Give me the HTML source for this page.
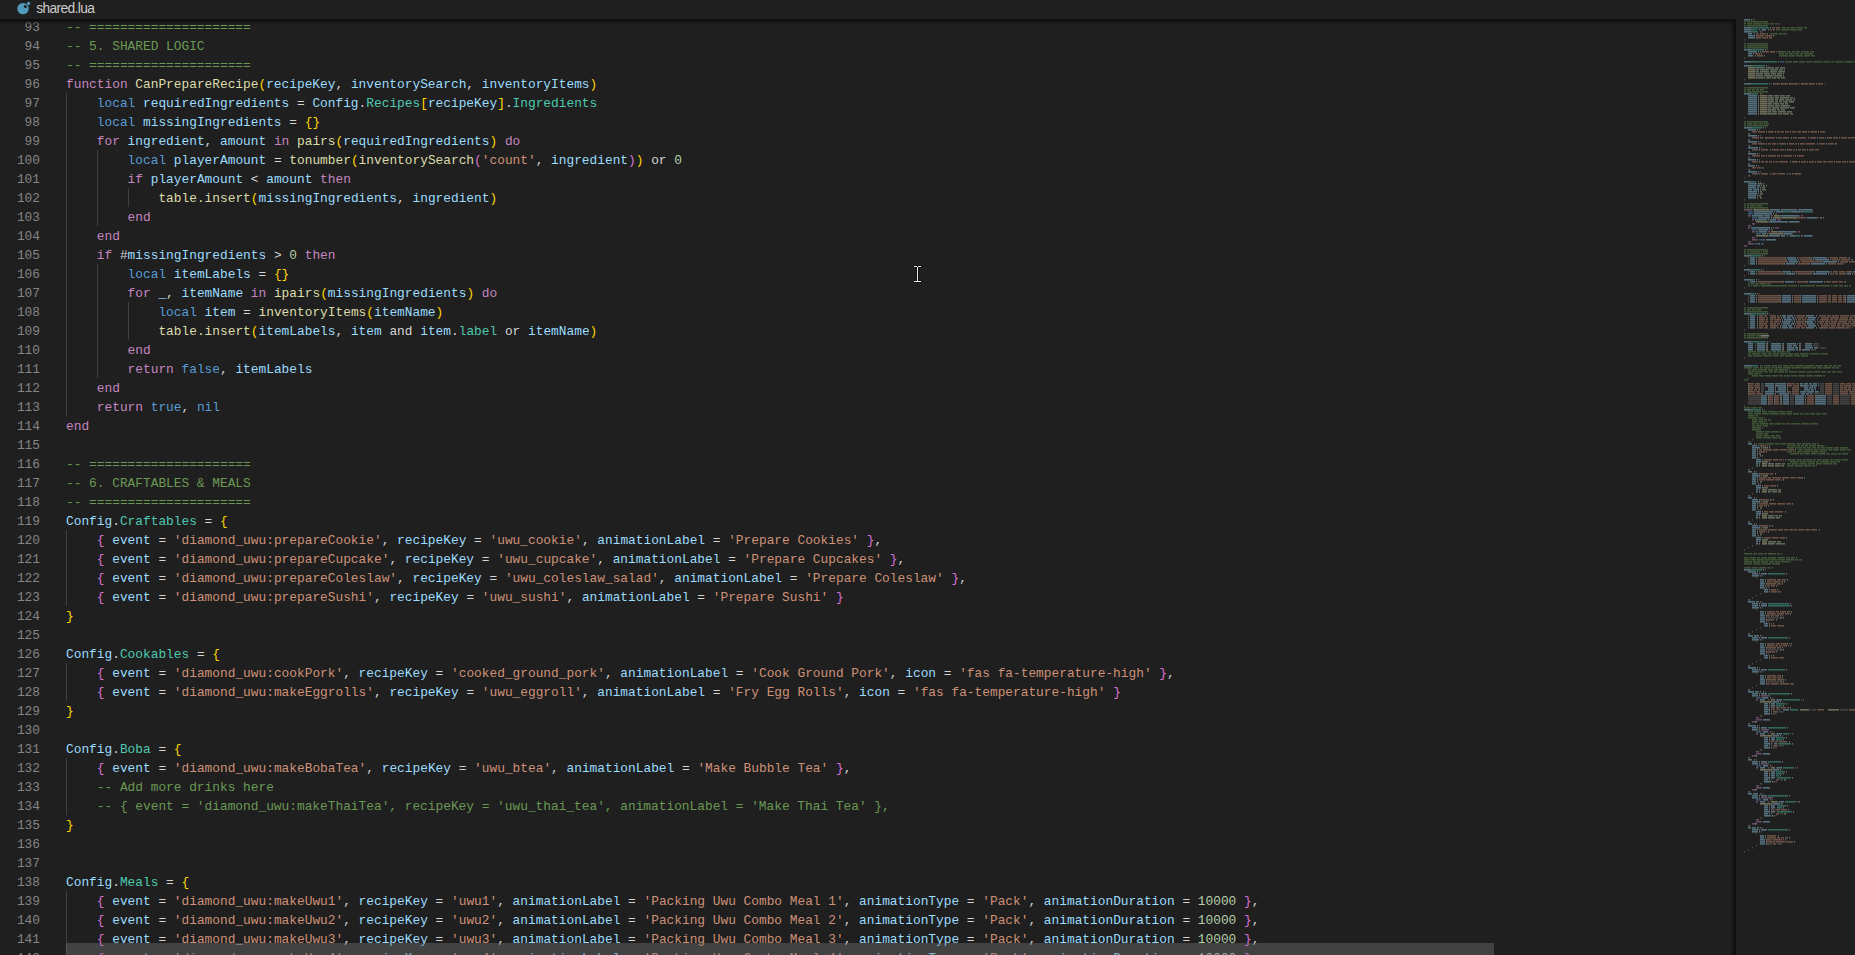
<!DOCTYPE html>
<html><head><meta charset="utf-8">
<style>
html,body{margin:0;padding:0;background:#1f1f1f;width:1855px;height:955px;overflow:hidden;position:relative}
.ed{position:absolute;left:0;top:0;width:1855px;height:955px;overflow:hidden}
.l,.n{position:absolute;white-space:pre;font-family:"Liberation Mono",monospace;font-size:12.83px;line-height:19px;height:19px}
.l{left:66px}
.n{left:0;width:40px;text-align:right;color:#858585}
.g{position:absolute;width:1px;background:#404040}
i,b{font-style:normal;font-weight:normal}
.kw{color:#c586c0}.st{color:#569cd6}.op{color:#d4d4d4}.fn{color:#dcdcaa}.var{color:#9cdcfe}.fld{color:#4ec9b0}.str{color:#ce9178}.num{color:#b5cea8}.com{color:#6a9955}
.tab{position:absolute;left:0;top:0;width:1855px;height:19px;background:#1f1f1f;z-index:5}
.tabtxt{position:absolute;left:36.3px;top:0;font-family:"Liberation Sans",sans-serif;font-size:13.8px;line-height:17px;color:#cccccc;letter-spacing:-0.65px}
.shadow{position:absolute;left:0;top:19px;width:1736px;height:6px;background:linear-gradient(#0c0c0c,rgba(0,0,0,0));z-index:5}
.mm{position:absolute;left:1736px;top:0;width:119px;height:955px;background:#1f1f1f;z-index:4}
.mmshadow{position:absolute;left:1730px;top:0;width:6px;height:955px;background:linear-gradient(to left,rgba(0,0,0,0.6),rgba(0,0,0,0));z-index:4}
.mmstripe{position:absolute;left:0;top:19px;width:119px;height:936px;background:repeating-linear-gradient(to bottom,rgba(31,31,31,0) 0px,rgba(31,31,31,0) 1px,rgba(31,31,31,0.4) 1px,rgba(31,31,31,0.4) 2px)}
.hs{position:absolute;left:66px;top:943px;width:1428px;height:12px;background:rgba(121,121,121,0.4);z-index:3}
.cur{position:absolute;left:912px;top:264px;z-index:6}
</style></head><body>
<div class="ed">
<div class="g" style="left:66px;top:93px;height:323px"></div>
<div class="g" style="left:66px;top:530px;height:76px"></div>
<div class="g" style="left:66px;top:663px;height:38px"></div>
<div class="g" style="left:66px;top:758px;height:57px"></div>
<div class="g" style="left:66px;top:891px;height:76px"></div>
<div class="g" style="left:97px;top:150px;height:76px"></div>
<div class="g" style="left:97px;top:264px;height:114px"></div>
<div class="g" style="left:128px;top:188px;height:19px"></div>
<div class="g" style="left:128px;top:302px;height:38px"></div>
<div class="n" style="top:18px">93</div>
<div class="n" style="top:37px">94</div>
<div class="n" style="top:56px">95</div>
<div class="n" style="top:75px">96</div>
<div class="n" style="top:94px">97</div>
<div class="n" style="top:113px">98</div>
<div class="n" style="top:132px">99</div>
<div class="n" style="top:151px">100</div>
<div class="n" style="top:170px">101</div>
<div class="n" style="top:189px">102</div>
<div class="n" style="top:208px">103</div>
<div class="n" style="top:227px">104</div>
<div class="n" style="top:246px">105</div>
<div class="n" style="top:265px">106</div>
<div class="n" style="top:284px">107</div>
<div class="n" style="top:303px">108</div>
<div class="n" style="top:322px">109</div>
<div class="n" style="top:341px">110</div>
<div class="n" style="top:360px">111</div>
<div class="n" style="top:379px">112</div>
<div class="n" style="top:398px">113</div>
<div class="n" style="top:417px">114</div>
<div class="n" style="top:436px">115</div>
<div class="n" style="top:455px">116</div>
<div class="n" style="top:474px">117</div>
<div class="n" style="top:493px">118</div>
<div class="n" style="top:512px">119</div>
<div class="n" style="top:531px">120</div>
<div class="n" style="top:550px">121</div>
<div class="n" style="top:569px">122</div>
<div class="n" style="top:588px">123</div>
<div class="n" style="top:607px">124</div>
<div class="n" style="top:626px">125</div>
<div class="n" style="top:645px">126</div>
<div class="n" style="top:664px">127</div>
<div class="n" style="top:683px">128</div>
<div class="n" style="top:702px">129</div>
<div class="n" style="top:721px">130</div>
<div class="n" style="top:740px">131</div>
<div class="n" style="top:759px">132</div>
<div class="n" style="top:778px">133</div>
<div class="n" style="top:797px">134</div>
<div class="n" style="top:816px">135</div>
<div class="n" style="top:835px">136</div>
<div class="n" style="top:854px">137</div>
<div class="n" style="top:873px">138</div>
<div class="n" style="top:892px">139</div>
<div class="n" style="top:911px">140</div>
<div class="n" style="top:930px">141</div>
<div class="n" style="top:949px">142</div>
<div class="l" style="top:18px"><i class="com">-- =====================</i></div>
<div class="l" style="top:37px"><i class="com">-- 5. SHARED LOGIC</i></div>
<div class="l" style="top:56px"><i class="com">-- =====================</i></div>
<div class="l" style="top:75px"><i class="kw">function</i> <i class="fn">CanPrepareRecipe</i><b style="color:#ffd700">(</b><i class="var">recipeKey</i><i class="op">,</i> <i class="var">inventorySearch</i><i class="op">,</i> <i class="var">inventoryItems</i><b style="color:#ffd700">)</b></div>
<div class="l" style="top:94px">    <i class="st">local</i> <i class="var">requiredIngredients</i> <i class="op">=</i> <i class="var">Config</i><i class="op">.</i><i class="fld">Recipes</i><b style="color:#ffd700">[</b><i class="var">recipeKey</i><b style="color:#ffd700">]</b><i class="op">.</i><i class="fld">Ingredients</i></div>
<div class="l" style="top:113px">    <i class="st">local</i> <i class="var">missingIngredients</i> <i class="op">=</i> <b style="color:#ffd700">{</b><b style="color:#ffd700">}</b></div>
<div class="l" style="top:132px">    <i class="kw">for</i> <i class="var">ingredient</i><i class="op">,</i> <i class="var">amount</i> <i class="kw">in</i> <i class="fn">pairs</i><b style="color:#ffd700">(</b><i class="var">requiredIngredients</i><b style="color:#ffd700">)</b> <i class="kw">do</i></div>
<div class="l" style="top:151px">        <i class="st">local</i> <i class="var">playerAmount</i> <i class="op">=</i> <i class="fn">tonumber</i><b style="color:#ffd700">(</b><i class="fn">inventorySearch</i><b style="color:#da70d6">(</b><i class="str">&#x27;count&#x27;</i><i class="op">,</i> <i class="var">ingredient</i><b style="color:#da70d6">)</b><b style="color:#ffd700">)</b> <i class="op">or</i> <i class="num">0</i></div>
<div class="l" style="top:170px">        <i class="kw">if</i> <i class="var">playerAmount</i> <i class="op">&lt;</i> <i class="var">amount</i> <i class="kw">then</i></div>
<div class="l" style="top:189px">            <i class="fn">table</i><i class="fn">.</i><i class="fn">insert</i><b style="color:#ffd700">(</b><i class="var">missingIngredients</i><i class="op">,</i> <i class="var">ingredient</i><b style="color:#ffd700">)</b></div>
<div class="l" style="top:208px">        <i class="kw">end</i></div>
<div class="l" style="top:227px">    <i class="kw">end</i></div>
<div class="l" style="top:246px">    <i class="kw">if</i> <i class="op">#</i><i class="var">missingIngredients</i> <i class="op">&gt;</i> <i class="num">0</i> <i class="kw">then</i></div>
<div class="l" style="top:265px">        <i class="st">local</i> <i class="var">itemLabels</i> <i class="op">=</i> <b style="color:#ffd700">{</b><b style="color:#ffd700">}</b></div>
<div class="l" style="top:284px">        <i class="kw">for</i> <i class="var">_</i><i class="op">,</i> <i class="var">itemName</i> <i class="kw">in</i> <i class="fn">ipairs</i><b style="color:#ffd700">(</b><i class="var">missingIngredients</i><b style="color:#ffd700">)</b> <i class="kw">do</i></div>
<div class="l" style="top:303px">            <i class="st">local</i> <i class="var">item</i> <i class="op">=</i> <i class="fn">inventoryItems</i><b style="color:#ffd700">(</b><i class="var">itemName</i><b style="color:#ffd700">)</b></div>
<div class="l" style="top:322px">            <i class="fn">table</i><i class="fn">.</i><i class="fn">insert</i><b style="color:#ffd700">(</b><i class="var">itemLabels</i><i class="op">,</i> <i class="var">item</i> <i class="op">and</i> <i class="var">item</i><i class="op">.</i><i class="fld">label</i> <i class="op">or</i> <i class="var">itemName</i><b style="color:#ffd700">)</b></div>
<div class="l" style="top:341px">        <i class="kw">end</i></div>
<div class="l" style="top:360px">        <i class="kw">return</i> <i class="st">false</i><i class="op">,</i> <i class="var">itemLabels</i></div>
<div class="l" style="top:379px">    <i class="kw">end</i></div>
<div class="l" style="top:398px">    <i class="kw">return</i> <i class="st">true</i><i class="op">,</i> <i class="st">nil</i></div>
<div class="l" style="top:417px"><i class="kw">end</i></div>
<div class="l" style="top:436px"></div>
<div class="l" style="top:455px"><i class="com">-- =====================</i></div>
<div class="l" style="top:474px"><i class="com">-- 6. CRAFTABLES &amp; MEALS</i></div>
<div class="l" style="top:493px"><i class="com">-- =====================</i></div>
<div class="l" style="top:512px"><i class="var">Config</i><i class="op">.</i><i class="fld">Craftables</i> <i class="op">=</i> <b style="color:#ffd700">{</b></div>
<div class="l" style="top:531px">    <b style="color:#da70d6">{</b> <i class="var">event</i> <i class="op">=</i> <i class="str">&#x27;diamond_uwu:prepareCookie&#x27;</i><i class="op">,</i> <i class="var">recipeKey</i> <i class="op">=</i> <i class="str">&#x27;uwu_cookie&#x27;</i><i class="op">,</i> <i class="var">animationLabel</i> <i class="op">=</i> <i class="str">&#x27;Prepare Cookies&#x27;</i> <b style="color:#da70d6">}</b><i class="op">,</i></div>
<div class="l" style="top:550px">    <b style="color:#da70d6">{</b> <i class="var">event</i> <i class="op">=</i> <i class="str">&#x27;diamond_uwu:prepareCupcake&#x27;</i><i class="op">,</i> <i class="var">recipeKey</i> <i class="op">=</i> <i class="str">&#x27;uwu_cupcake&#x27;</i><i class="op">,</i> <i class="var">animationLabel</i> <i class="op">=</i> <i class="str">&#x27;Prepare Cupcakes&#x27;</i> <b style="color:#da70d6">}</b><i class="op">,</i></div>
<div class="l" style="top:569px">    <b style="color:#da70d6">{</b> <i class="var">event</i> <i class="op">=</i> <i class="str">&#x27;diamond_uwu:prepareColeslaw&#x27;</i><i class="op">,</i> <i class="var">recipeKey</i> <i class="op">=</i> <i class="str">&#x27;uwu_coleslaw_salad&#x27;</i><i class="op">,</i> <i class="var">animationLabel</i> <i class="op">=</i> <i class="str">&#x27;Prepare Coleslaw&#x27;</i> <b style="color:#da70d6">}</b><i class="op">,</i></div>
<div class="l" style="top:588px">    <b style="color:#da70d6">{</b> <i class="var">event</i> <i class="op">=</i> <i class="str">&#x27;diamond_uwu:prepareSushi&#x27;</i><i class="op">,</i> <i class="var">recipeKey</i> <i class="op">=</i> <i class="str">&#x27;uwu_sushi&#x27;</i><i class="op">,</i> <i class="var">animationLabel</i> <i class="op">=</i> <i class="str">&#x27;Prepare Sushi&#x27;</i> <b style="color:#da70d6">}</b></div>
<div class="l" style="top:607px"><b style="color:#ffd700">}</b></div>
<div class="l" style="top:626px"></div>
<div class="l" style="top:645px"><i class="var">Config</i><i class="op">.</i><i class="fld">Cookables</i> <i class="op">=</i> <b style="color:#ffd700">{</b></div>
<div class="l" style="top:664px">    <b style="color:#da70d6">{</b> <i class="var">event</i> <i class="op">=</i> <i class="str">&#x27;diamond_uwu:cookPork&#x27;</i><i class="op">,</i> <i class="var">recipeKey</i> <i class="op">=</i> <i class="str">&#x27;cooked_ground_pork&#x27;</i><i class="op">,</i> <i class="var">animationLabel</i> <i class="op">=</i> <i class="str">&#x27;Cook Ground Pork&#x27;</i><i class="op">,</i> <i class="var">icon</i> <i class="op">=</i> <i class="str">&#x27;fas fa-temperature-high&#x27;</i> <b style="color:#da70d6">}</b><i class="op">,</i></div>
<div class="l" style="top:683px">    <b style="color:#da70d6">{</b> <i class="var">event</i> <i class="op">=</i> <i class="str">&#x27;diamond_uwu:makeEggrolls&#x27;</i><i class="op">,</i> <i class="var">recipeKey</i> <i class="op">=</i> <i class="str">&#x27;uwu_eggroll&#x27;</i><i class="op">,</i> <i class="var">animationLabel</i> <i class="op">=</i> <i class="str">&#x27;Fry Egg Rolls&#x27;</i><i class="op">,</i> <i class="var">icon</i> <i class="op">=</i> <i class="str">&#x27;fas fa-temperature-high&#x27;</i> <b style="color:#da70d6">}</b></div>
<div class="l" style="top:702px"><b style="color:#ffd700">}</b></div>
<div class="l" style="top:721px"></div>
<div class="l" style="top:740px"><i class="var">Config</i><i class="op">.</i><i class="fld">Boba</i> <i class="op">=</i> <b style="color:#ffd700">{</b></div>
<div class="l" style="top:759px">    <b style="color:#da70d6">{</b> <i class="var">event</i> <i class="op">=</i> <i class="str">&#x27;diamond_uwu:makeBobaTea&#x27;</i><i class="op">,</i> <i class="var">recipeKey</i> <i class="op">=</i> <i class="str">&#x27;uwu_btea&#x27;</i><i class="op">,</i> <i class="var">animationLabel</i> <i class="op">=</i> <i class="str">&#x27;Make Bubble Tea&#x27;</i> <b style="color:#da70d6">}</b><i class="op">,</i></div>
<div class="l" style="top:778px">    <i class="com">-- Add more drinks here</i></div>
<div class="l" style="top:797px">    <i class="com">-- { event = &#x27;diamond_uwu:makeThaiTea&#x27;, recipeKey = &#x27;uwu_thai_tea&#x27;, animationLabel = &#x27;Make Thai Tea&#x27; },</i></div>
<div class="l" style="top:816px"><b style="color:#ffd700">}</b></div>
<div class="l" style="top:835px"></div>
<div class="l" style="top:854px"></div>
<div class="l" style="top:873px"><i class="var">Config</i><i class="op">.</i><i class="fld">Meals</i> <i class="op">=</i> <b style="color:#ffd700">{</b></div>
<div class="l" style="top:892px">    <b style="color:#da70d6">{</b> <i class="var">event</i> <i class="op">=</i> <i class="str">&#x27;diamond_uwu:makeUwu1&#x27;</i><i class="op">,</i> <i class="var">recipeKey</i> <i class="op">=</i> <i class="str">&#x27;uwu1&#x27;</i><i class="op">,</i> <i class="var">animationLabel</i> <i class="op">=</i> <i class="str">&#x27;Packing Uwu Combo Meal 1&#x27;</i><i class="op">,</i> <i class="var">animationType</i> <i class="op">=</i> <i class="str">&#x27;Pack&#x27;</i><i class="op">,</i> <i class="var">animationDuration</i> <i class="op">=</i> <i class="num">10000</i> <b style="color:#da70d6">}</b><i class="op">,</i></div>
<div class="l" style="top:911px">    <b style="color:#da70d6">{</b> <i class="var">event</i> <i class="op">=</i> <i class="str">&#x27;diamond_uwu:makeUwu2&#x27;</i><i class="op">,</i> <i class="var">recipeKey</i> <i class="op">=</i> <i class="str">&#x27;uwu2&#x27;</i><i class="op">,</i> <i class="var">animationLabel</i> <i class="op">=</i> <i class="str">&#x27;Packing Uwu Combo Meal 2&#x27;</i><i class="op">,</i> <i class="var">animationType</i> <i class="op">=</i> <i class="str">&#x27;Pack&#x27;</i><i class="op">,</i> <i class="var">animationDuration</i> <i class="op">=</i> <i class="num">10000</i> <b style="color:#da70d6">}</b><i class="op">,</i></div>
<div class="l" style="top:930px">    <b style="color:#da70d6">{</b> <i class="var">event</i> <i class="op">=</i> <i class="str">&#x27;diamond_uwu:makeUwu3&#x27;</i><i class="op">,</i> <i class="var">recipeKey</i> <i class="op">=</i> <i class="str">&#x27;uwu3&#x27;</i><i class="op">,</i> <i class="var">animationLabel</i> <i class="op">=</i> <i class="str">&#x27;Packing Uwu Combo Meal 3&#x27;</i><i class="op">,</i> <i class="var">animationType</i> <i class="op">=</i> <i class="str">&#x27;Pack&#x27;</i><i class="op">,</i> <i class="var">animationDuration</i> <i class="op">=</i> <i class="num">10000</i> <b style="color:#da70d6">}</b><i class="op">,</i></div>
<div class="l" style="top:949px">    <b style="color:#da70d6">{</b> <i class="var">event</i> <i class="op">=</i> <i class="str">&#x27;diamond_uwu:makeUwu4&#x27;</i><i class="op">,</i> <i class="var">recipeKey</i> <i class="op">=</i> <i class="str">&#x27;uwu4&#x27;</i><i class="op">,</i> <i class="var">animationLabel</i> <i class="op">=</i> <i class="str">&#x27;Packing Uwu Combo Meal 4&#x27;</i><i class="op">,</i> <i class="var">animationType</i> <i class="op">=</i> <i class="str">&#x27;Pack&#x27;</i><i class="op">,</i> <i class="var">animationDuration</i> <i class="op">=</i> <i class="num">10000</i> <b style="color:#da70d6">}</b><i class="op">,</i></div>
</div>
<div class="hs"></div>
<div class="tab">
<svg style="position:absolute;left:15px;top:0" width="18" height="18" viewBox="0 0 18 18">
<circle cx="8" cy="8.6" r="5.7" fill="#519aba"/>
<circle cx="10.3" cy="6.5" r="1.5" fill="#1f1f1f"/>
<circle cx="13.6" cy="3.4" r="1.65" fill="#519aba"/>
</svg>
<div class="tabtxt">shared.lua</div>
</div>
<div class="shadow"></div>
<div class="mmshadow"></div>
<div class="mm"><svg width="119" height="955" style="position:absolute;left:0;top:0;filter:blur(0.35px)" shape-rendering="crispEdges"><g opacity="0.42"><rect x="8" y="19" width="6" height="2" fill="#9cdcfe"/><rect x="15" y="19" width="1" height="2" fill="#d4d4d4"/><rect x="17" y="19" width="2" height="2" fill="#c8c8b0" opacity="0.6"/><rect x="8" y="21" width="2" height="2" fill="#6a9955"/><rect x="11" y="21" width="21" height="2" fill="#6a9955"/><rect x="8" y="23" width="2" height="2" fill="#6a9955"/><rect x="11" y="23" width="5" height="2" fill="#6a9955"/><rect x="17" y="23" width="9" height="2" fill="#6a9955"/><rect x="27" y="23" width="6" height="2" fill="#6a9955"/><rect x="34" y="23" width="4" height="2" fill="#6a9955"/><rect x="39" y="23" width="3" height="2" fill="#6a9955"/><rect x="43" y="23" width="1" height="2" fill="#6a9955"/><rect x="8" y="25" width="2" height="2" fill="#6a9955"/><rect x="11" y="25" width="21" height="2" fill="#6a9955"/><rect x="8" y="27" width="6" height="2" fill="#9cdcfe"/><rect x="14" y="27" width="1" height="2" fill="#d4d4d4"/><rect x="15" y="27" width="18" height="2" fill="#4ec9b0"/><rect x="34" y="27" width="1" height="2" fill="#d4d4d4"/><rect x="36" y="27" width="3" height="2" fill="#ce9178"/><rect x="40" y="27" width="4" height="2" fill="#ce9178"/><rect x="46" y="27" width="4" height="2" fill="#6a9955"/><rect x="51" y="27" width="3" height="2" fill="#6a9955"/><rect x="55" y="27" width="4" height="2" fill="#6a9955"/><rect x="60" y="27" width="7" height="2" fill="#6a9955"/><rect x="68" y="27" width="3" height="2" fill="#6a9955"/><rect x="8" y="29" width="6" height="2" fill="#9cdcfe"/><rect x="14" y="29" width="1" height="2" fill="#d4d4d4"/><rect x="15" y="29" width="6" height="2" fill="#4ec9b0"/><rect x="23" y="29" width="1" height="2" fill="#d4d4d4"/><rect x="25" y="29" width="1" height="2" fill="#c8c8b0" opacity="0.6"/><rect x="26" y="29" width="4" height="2" fill="#9cdcfe"/><rect x="32" y="29" width="1" height="2" fill="#d4d4d4"/><rect x="34" y="29" width="2" height="2" fill="#ce9178"/><rect x="37" y="29" width="1" height="2" fill="#d4d4d4"/><rect x="38" y="29" width="1" height="2" fill="#c8c8b0" opacity="0.6"/><rect x="40" y="29" width="4" height="2" fill="#6a9955"/><rect x="45" y="29" width="8" height="2" fill="#6a9955"/><rect x="54" y="29" width="7" height="2" fill="#6a9955"/><rect x="62" y="29" width="4" height="2" fill="#6a9955"/><rect x="8" y="31" width="6" height="2" fill="#9cdcfe"/><rect x="14" y="31" width="1" height="2" fill="#d4d4d4"/><rect x="15" y="31" width="7" height="2" fill="#4ec9b0"/><rect x="24" y="31" width="1" height="2" fill="#d4d4d4"/><rect x="26" y="31" width="1" height="2" fill="#c8c8b0" opacity="0.6"/><rect x="12" y="33" width="4" height="2" fill="#9cdcfe"/><rect x="18" y="33" width="1" height="2" fill="#d4d4d4"/><rect x="20" y="33" width="3" height="2" fill="#ce9178"/><rect x="24" y="33" width="6" height="2" fill="#ce9178"/><rect x="31" y="33" width="1" height="2" fill="#d4d4d4"/><rect x="34" y="33" width="8" height="2" fill="#6a9955"/><rect x="43" y="33" width="3" height="2" fill="#6a9955"/><rect x="47" y="33" width="4" height="2" fill="#6a9955"/><rect x="12" y="35" width="7" height="2" fill="#9cdcfe"/><rect x="20" y="35" width="1" height="2" fill="#d4d4d4"/><rect x="21" y="35" width="7" height="2" fill="#ce9178"/><rect x="29" y="35" width="7" height="2" fill="#ce9178"/><rect x="37" y="35" width="1" height="2" fill="#d4d4d4"/><rect x="12" y="37" width="7" height="2" fill="#9cdcfe"/><rect x="20" y="37" width="1" height="2" fill="#d4d4d4"/><rect x="21" y="37" width="4" height="2" fill="#ce9178"/><rect x="26" y="37" width="6" height="2" fill="#ce9178"/><rect x="33" y="37" width="3" height="2" fill="#ce9178"/><rect x="8" y="39" width="1" height="2" fill="#c8c8b0" opacity="0.6"/><rect x="8" y="43" width="2" height="2" fill="#6a9955"/><rect x="11" y="43" width="21" height="2" fill="#6a9955"/><rect x="8" y="45" width="2" height="2" fill="#6a9955"/><rect x="11" y="45" width="21" height="2" fill="#6a9955"/><rect x="8" y="47" width="2" height="2" fill="#6a9955"/><rect x="11" y="47" width="21" height="2" fill="#6a9955"/><rect x="8" y="49" width="6" height="2" fill="#9cdcfe"/><rect x="14" y="49" width="1" height="2" fill="#d4d4d4"/><rect x="15" y="49" width="13" height="2" fill="#4ec9b0"/><rect x="29" y="49" width="1" height="2" fill="#d4d4d4"/><rect x="31" y="49" width="1" height="2" fill="#c8c8b0" opacity="0.6"/><rect x="12" y="51" width="9" height="2" fill="#9cdcfe"/><rect x="22" y="51" width="1" height="2" fill="#9cdcfe"/><rect x="24" y="51" width="1" height="2" fill="#d4d4d4"/><rect x="26" y="51" width="7" height="2" fill="#ce9178"/><rect x="34" y="51" width="5" height="2" fill="#ce9178"/><rect x="40" y="51" width="1" height="2" fill="#ce9178"/><rect x="42" y="51" width="1" height="2" fill="#d4d4d4"/><rect x="43" y="51" width="7" height="2" fill="#6a9955"/><rect x="51" y="51" width="4" height="2" fill="#6a9955"/><rect x="56" y="51" width="3" height="2" fill="#6a9955"/><rect x="60" y="51" width="4" height="2" fill="#6a9955"/><rect x="65" y="51" width="8" height="2" fill="#6a9955"/><rect x="74" y="51" width="4" height="2" fill="#6a9955"/><rect x="12" y="53" width="4" height="2" fill="#9cdcfe"/><rect x="17" y="53" width="1" height="2" fill="#d4d4d4"/><rect x="19" y="53" width="5" height="2" fill="#ce9178"/><rect x="25" y="53" width="1" height="2" fill="#d4d4d4"/><rect x="43" y="53" width="5" height="2" fill="#6a9955"/><rect x="49" y="53" width="3" height="2" fill="#6a9955"/><rect x="53" y="53" width="4" height="2" fill="#6a9955"/><rect x="58" y="53" width="5" height="2" fill="#6a9955"/><rect x="64" y="53" width="3" height="2" fill="#6a9955"/><rect x="68" y="53" width="9" height="2" fill="#6a9955"/><rect x="12" y="55" width="5" height="2" fill="#9cdcfe"/><rect x="19" y="55" width="1" height="2" fill="#d4d4d4"/><rect x="21" y="55" width="6" height="2" fill="#ce9178"/><rect x="28" y="55" width="1" height="2" fill="#d4d4d4"/><rect x="43" y="55" width="9" height="2" fill="#6a9955"/><rect x="53" y="55" width="6" height="2" fill="#6a9955"/><rect x="60" y="55" width="7" height="2" fill="#6a9955"/><rect x="68" y="55" width="6" height="2" fill="#6a9955"/><rect x="75" y="55" width="4" height="2" fill="#6a9955"/><rect x="8" y="57" width="1" height="2" fill="#c8c8b0" opacity="0.6"/><rect x="8" y="61" width="6" height="2" fill="#9cdcfe"/><rect x="14" y="61" width="1" height="2" fill="#d4d4d4"/><rect x="15" y="61" width="26" height="2" fill="#4ec9b0"/><rect x="42" y="61" width="1" height="2" fill="#d4d4d4"/><rect x="44" y="61" width="4" height="2" fill="#569cd6"/><rect x="49" y="61" width="7" height="2" fill="#6a9955"/><rect x="57" y="61" width="5" height="2" fill="#6a9955"/><rect x="63" y="61" width="6" height="2" fill="#6a9955"/><rect x="70" y="61" width="6" height="2" fill="#6a9955"/><rect x="77" y="61" width="9" height="2" fill="#6a9955"/><rect x="87" y="61" width="7" height="2" fill="#6a9955"/><rect x="95" y="61" width="3" height="2" fill="#6a9955"/><rect x="99" y="61" width="8" height="2" fill="#6a9955"/><rect x="108" y="61" width="9" height="2" fill="#6a9955"/><rect x="118" y="61" width="1" height="2" fill="#6a9955"/><rect x="8" y="65" width="6" height="2" fill="#9cdcfe"/><rect x="14" y="65" width="1" height="2" fill="#d4d4d4"/><rect x="15" y="65" width="14" height="2" fill="#4ec9b0"/><rect x="30" y="65" width="1" height="2" fill="#d4d4d4"/><rect x="32" y="65" width="1" height="2" fill="#c8c8b0" opacity="0.6"/><rect x="12" y="67" width="7" height="2" fill="#dcdcaa"/><rect x="19" y="67" width="1" height="2" fill="#c8c8b0" opacity="0.6"/><rect x="20" y="67" width="9" height="2" fill="#b5cea8"/><rect x="30" y="67" width="8" height="2" fill="#b5cea8"/><rect x="39" y="67" width="4" height="2" fill="#b5cea8"/><rect x="44" y="67" width="5" height="2" fill="#b5cea8"/><rect x="12" y="69" width="7" height="2" fill="#dcdcaa"/><rect x="19" y="69" width="1" height="2" fill="#c8c8b0" opacity="0.6"/><rect x="20" y="69" width="3" height="2" fill="#b5cea8"/><rect x="24" y="69" width="9" height="2" fill="#b5cea8"/><rect x="34" y="69" width="8" height="2" fill="#b5cea8"/><rect x="43" y="69" width="4" height="2" fill="#b5cea8"/><rect x="48" y="69" width="1" height="2" fill="#b5cea8"/><rect x="12" y="71" width="7" height="2" fill="#dcdcaa"/><rect x="19" y="71" width="1" height="2" fill="#c8c8b0" opacity="0.6"/><rect x="20" y="71" width="3" height="2" fill="#b5cea8"/><rect x="24" y="71" width="9" height="2" fill="#b5cea8"/><rect x="34" y="71" width="7" height="2" fill="#b5cea8"/><rect x="42" y="71" width="7" height="2" fill="#b5cea8"/><rect x="12" y="73" width="7" height="2" fill="#dcdcaa"/><rect x="19" y="73" width="1" height="2" fill="#c8c8b0" opacity="0.6"/><rect x="20" y="73" width="7" height="2" fill="#b5cea8"/><rect x="28" y="73" width="6" height="2" fill="#b5cea8"/><rect x="35" y="73" width="5" height="2" fill="#b5cea8"/><rect x="41" y="73" width="5" height="2" fill="#b5cea8"/><rect x="47" y="73" width="1" height="2" fill="#b5cea8"/><rect x="12" y="75" width="7" height="2" fill="#dcdcaa"/><rect x="19" y="75" width="1" height="2" fill="#c8c8b0" opacity="0.6"/><rect x="20" y="75" width="7" height="2" fill="#b5cea8"/><rect x="28" y="75" width="9" height="2" fill="#b5cea8"/><rect x="38" y="75" width="8" height="2" fill="#b5cea8"/><rect x="47" y="75" width="1" height="2" fill="#b5cea8"/><rect x="12" y="77" width="7" height="2" fill="#dcdcaa"/><rect x="19" y="77" width="1" height="2" fill="#c8c8b0" opacity="0.6"/><rect x="20" y="77" width="9" height="2" fill="#b5cea8"/><rect x="30" y="77" width="5" height="2" fill="#b5cea8"/><rect x="36" y="77" width="4" height="2" fill="#b5cea8"/><rect x="41" y="77" width="3" height="2" fill="#b5cea8"/><rect x="45" y="77" width="4" height="2" fill="#b5cea8"/><rect x="8" y="79" width="1" height="2" fill="#c8c8b0" opacity="0.6"/><rect x="8" y="83" width="6" height="2" fill="#9cdcfe"/><rect x="14" y="83" width="1" height="2" fill="#d4d4d4"/><rect x="15" y="83" width="17" height="2" fill="#4ec9b0"/><rect x="33" y="83" width="1" height="2" fill="#d4d4d4"/><rect x="35" y="83" width="1" height="2" fill="#c8c8b0" opacity="0.6"/><rect x="37" y="83" width="7" height="2" fill="#ce9178"/><rect x="45" y="83" width="1" height="2" fill="#d4d4d4"/><rect x="46" y="83" width="6" height="2" fill="#ce9178"/><rect x="53" y="83" width="1" height="2" fill="#d4d4d4"/><rect x="54" y="83" width="8" height="2" fill="#ce9178"/><rect x="63" y="83" width="1" height="2" fill="#ce9178"/><rect x="65" y="83" width="1" height="2" fill="#d4d4d4"/><rect x="66" y="83" width="6" height="2" fill="#ce9178"/><rect x="73" y="83" width="1" height="2" fill="#d4d4d4"/><rect x="74" y="83" width="5" height="2" fill="#ce9178"/><rect x="80" y="83" width="1" height="2" fill="#d4d4d4"/><rect x="82" y="83" width="5" height="2" fill="#ce9178"/><rect x="89" y="83" width="1" height="2" fill="#c8c8b0" opacity="0.6"/><rect x="8" y="87" width="2" height="2" fill="#6a9955"/><rect x="11" y="87" width="21" height="2" fill="#6a9955"/><rect x="8" y="89" width="2" height="2" fill="#6a9955"/><rect x="11" y="89" width="4" height="2" fill="#6a9955"/><rect x="16" y="89" width="3" height="2" fill="#6a9955"/><rect x="20" y="89" width="3" height="2" fill="#6a9955"/><rect x="24" y="89" width="4" height="2" fill="#6a9955"/><rect x="8" y="91" width="2" height="2" fill="#6a9955"/><rect x="11" y="91" width="21" height="2" fill="#6a9955"/><rect x="8" y="93" width="6" height="2" fill="#9cdcfe"/><rect x="14" y="93" width="1" height="2" fill="#d4d4d4"/><rect x="15" y="93" width="7" height="2" fill="#4ec9b0"/><rect x="24" y="93" width="1" height="2" fill="#d4d4d4"/><rect x="26" y="93" width="1" height="2" fill="#c8c8b0" opacity="0.6"/><rect x="12" y="95" width="9" height="2" fill="#9cdcfe"/><rect x="22" y="95" width="1" height="2" fill="#d4d4d4"/><rect x="24" y="95" width="7" height="2" fill="#dcdcaa"/><rect x="31" y="95" width="1" height="2" fill="#c8c8b0" opacity="0.6"/><rect x="32" y="95" width="5" height="2" fill="#b5cea8"/><rect x="38" y="95" width="5" height="2" fill="#b5cea8"/><rect x="44" y="95" width="5" height="2" fill="#b5cea8"/><rect x="50" y="95" width="4" height="2" fill="#b5cea8"/><rect x="12" y="97" width="9" height="2" fill="#9cdcfe"/><rect x="22" y="97" width="1" height="2" fill="#d4d4d4"/><rect x="24" y="97" width="7" height="2" fill="#dcdcaa"/><rect x="31" y="97" width="1" height="2" fill="#c8c8b0" opacity="0.6"/><rect x="32" y="97" width="6" height="2" fill="#b5cea8"/><rect x="39" y="97" width="4" height="2" fill="#b5cea8"/><rect x="44" y="97" width="9" height="2" fill="#b5cea8"/><rect x="54" y="97" width="3" height="2" fill="#b5cea8"/><rect x="58" y="97" width="1" height="2" fill="#b5cea8"/><rect x="12" y="99" width="9" height="2" fill="#9cdcfe"/><rect x="22" y="99" width="1" height="2" fill="#d4d4d4"/><rect x="24" y="99" width="7" height="2" fill="#dcdcaa"/><rect x="31" y="99" width="1" height="2" fill="#c8c8b0" opacity="0.6"/><rect x="32" y="99" width="6" height="2" fill="#b5cea8"/><rect x="39" y="99" width="3" height="2" fill="#b5cea8"/><rect x="43" y="99" width="5" height="2" fill="#b5cea8"/><rect x="49" y="99" width="7" height="2" fill="#b5cea8"/><rect x="57" y="99" width="2" height="2" fill="#b5cea8"/><rect x="12" y="101" width="9" height="2" fill="#9cdcfe"/><rect x="22" y="101" width="1" height="2" fill="#d4d4d4"/><rect x="24" y="101" width="7" height="2" fill="#dcdcaa"/><rect x="31" y="101" width="1" height="2" fill="#c8c8b0" opacity="0.6"/><rect x="32" y="101" width="6" height="2" fill="#b5cea8"/><rect x="39" y="101" width="3" height="2" fill="#b5cea8"/><rect x="43" y="101" width="3" height="2" fill="#b5cea8"/><rect x="47" y="101" width="5" height="2" fill="#b5cea8"/><rect x="53" y="101" width="5" height="2" fill="#b5cea8"/><rect x="12" y="103" width="9" height="2" fill="#9cdcfe"/><rect x="22" y="103" width="1" height="2" fill="#d4d4d4"/><rect x="24" y="103" width="7" height="2" fill="#dcdcaa"/><rect x="31" y="103" width="1" height="2" fill="#c8c8b0" opacity="0.6"/><rect x="32" y="103" width="4" height="2" fill="#b5cea8"/><rect x="37" y="103" width="6" height="2" fill="#b5cea8"/><rect x="44" y="103" width="4" height="2" fill="#b5cea8"/><rect x="49" y="103" width="3" height="2" fill="#b5cea8"/><rect x="12" y="105" width="9" height="2" fill="#9cdcfe"/><rect x="22" y="105" width="1" height="2" fill="#d4d4d4"/><rect x="24" y="105" width="7" height="2" fill="#dcdcaa"/><rect x="31" y="105" width="1" height="2" fill="#c8c8b0" opacity="0.6"/><rect x="32" y="105" width="6" height="2" fill="#b5cea8"/><rect x="39" y="105" width="5" height="2" fill="#b5cea8"/><rect x="45" y="105" width="9" height="2" fill="#b5cea8"/><rect x="12" y="107" width="9" height="2" fill="#9cdcfe"/><rect x="22" y="107" width="1" height="2" fill="#d4d4d4"/><rect x="24" y="107" width="7" height="2" fill="#dcdcaa"/><rect x="31" y="107" width="1" height="2" fill="#c8c8b0" opacity="0.6"/><rect x="32" y="107" width="3" height="2" fill="#b5cea8"/><rect x="36" y="107" width="7" height="2" fill="#b5cea8"/><rect x="44" y="107" width="9" height="2" fill="#b5cea8"/><rect x="54" y="107" width="5" height="2" fill="#b5cea8"/><rect x="12" y="109" width="9" height="2" fill="#9cdcfe"/><rect x="22" y="109" width="1" height="2" fill="#d4d4d4"/><rect x="24" y="109" width="7" height="2" fill="#dcdcaa"/><rect x="31" y="109" width="1" height="2" fill="#c8c8b0" opacity="0.6"/><rect x="32" y="109" width="8" height="2" fill="#b5cea8"/><rect x="41" y="109" width="3" height="2" fill="#b5cea8"/><rect x="45" y="109" width="4" height="2" fill="#b5cea8"/><rect x="12" y="111" width="9" height="2" fill="#9cdcfe"/><rect x="22" y="111" width="1" height="2" fill="#d4d4d4"/><rect x="24" y="111" width="7" height="2" fill="#dcdcaa"/><rect x="31" y="111" width="1" height="2" fill="#c8c8b0" opacity="0.6"/><rect x="32" y="111" width="3" height="2" fill="#b5cea8"/><rect x="36" y="111" width="5" height="2" fill="#b5cea8"/><rect x="42" y="111" width="8" height="2" fill="#b5cea8"/><rect x="51" y="111" width="5" height="2" fill="#b5cea8"/><rect x="12" y="113" width="9" height="2" fill="#9cdcfe"/><rect x="22" y="113" width="1" height="2" fill="#d4d4d4"/><rect x="24" y="113" width="7" height="2" fill="#dcdcaa"/><rect x="31" y="113" width="1" height="2" fill="#c8c8b0" opacity="0.6"/><rect x="32" y="113" width="9" height="2" fill="#b5cea8"/><rect x="42" y="113" width="4" height="2" fill="#b5cea8"/><rect x="47" y="113" width="6" height="2" fill="#b5cea8"/><rect x="54" y="113" width="3" height="2" fill="#b5cea8"/><rect x="8" y="117" width="1" height="2" fill="#c8c8b0" opacity="0.6"/><rect x="8" y="121" width="2" height="2" fill="#6a9955"/><rect x="11" y="121" width="21" height="2" fill="#6a9955"/><rect x="8" y="123" width="2" height="2" fill="#6a9955"/><rect x="11" y="123" width="5" height="2" fill="#6a9955"/><rect x="17" y="123" width="5" height="2" fill="#6a9955"/><rect x="23" y="123" width="4" height="2" fill="#6a9955"/><rect x="28" y="123" width="5" height="2" fill="#6a9955"/><rect x="8" y="125" width="2" height="2" fill="#6a9955"/><rect x="11" y="125" width="21" height="2" fill="#6a9955"/><rect x="8" y="127" width="6" height="2" fill="#9cdcfe"/><rect x="14" y="127" width="1" height="2" fill="#d4d4d4"/><rect x="15" y="127" width="11" height="2" fill="#4ec9b0"/><rect x="27" y="127" width="1" height="2" fill="#d4d4d4"/><rect x="29" y="127" width="1" height="2" fill="#c8c8b0" opacity="0.6"/><rect x="12" y="129" width="8" height="2" fill="#9cdcfe"/><rect x="21" y="129" width="1" height="2" fill="#d4d4d4"/><rect x="23" y="129" width="1" height="2" fill="#c8c8b0" opacity="0.6"/><rect x="16" y="131" width="5" height="2" fill="#ce9178"/><rect x="22" y="131" width="7" height="2" fill="#ce9178"/><rect x="30" y="131" width="1" height="2" fill="#d4d4d4"/><rect x="32" y="131" width="6" height="2" fill="#ce9178"/><rect x="39" y="131" width="1" height="2" fill="#d4d4d4"/><rect x="41" y="131" width="3" height="2" fill="#ce9178"/><rect x="45" y="131" width="3" height="2" fill="#ce9178"/><rect x="49" y="131" width="4" height="2" fill="#ce9178"/><rect x="54" y="131" width="1" height="2" fill="#d4d4d4"/><rect x="56" y="131" width="4" height="2" fill="#ce9178"/><rect x="61" y="131" width="4" height="2" fill="#ce9178"/><rect x="66" y="131" width="5" height="2" fill="#ce9178"/><rect x="72" y="131" width="1" height="2" fill="#d4d4d4"/><rect x="74" y="131" width="7" height="2" fill="#ce9178"/><rect x="82" y="131" width="1" height="2" fill="#d4d4d4"/><rect x="84" y="131" width="5" height="2" fill="#ce9178"/><rect x="12" y="133" width="1" height="2" fill="#c8c8b0" opacity="0.6"/><rect x="13" y="133" width="1" height="2" fill="#d4d4d4"/><rect x="12" y="135" width="9" height="2" fill="#9cdcfe"/><rect x="22" y="135" width="1" height="2" fill="#d4d4d4"/><rect x="24" y="135" width="1" height="2" fill="#c8c8b0" opacity="0.6"/><rect x="16" y="137" width="7" height="2" fill="#ce9178"/><rect x="24" y="137" width="3" height="2" fill="#ce9178"/><rect x="29" y="137" width="1" height="2" fill="#d4d4d4"/><rect x="30" y="137" width="9" height="2" fill="#ce9178"/><rect x="40" y="137" width="1" height="2" fill="#d4d4d4"/><rect x="42" y="137" width="4" height="2" fill="#ce9178"/><rect x="47" y="137" width="6" height="2" fill="#ce9178"/><rect x="55" y="137" width="1" height="2" fill="#d4d4d4"/><rect x="57" y="137" width="4" height="2" fill="#ce9178"/><rect x="62" y="137" width="8" height="2" fill="#ce9178"/><rect x="72" y="137" width="1" height="2" fill="#d4d4d4"/><rect x="74" y="137" width="6" height="2" fill="#ce9178"/><rect x="81" y="137" width="1" height="2" fill="#d4d4d4"/><rect x="83" y="137" width="5" height="2" fill="#ce9178"/><rect x="89" y="137" width="1" height="2" fill="#d4d4d4"/><rect x="91" y="137" width="5" height="2" fill="#ce9178"/><rect x="97" y="137" width="5" height="2" fill="#ce9178"/><rect x="103" y="137" width="1" height="2" fill="#d4d4d4"/><rect x="105" y="137" width="6" height="2" fill="#ce9178"/><rect x="112" y="137" width="7" height="2" fill="#ce9178"/><rect x="12" y="139" width="1" height="2" fill="#c8c8b0" opacity="0.6"/><rect x="13" y="139" width="1" height="2" fill="#d4d4d4"/><rect x="12" y="141" width="9" height="2" fill="#9cdcfe"/><rect x="22" y="141" width="1" height="2" fill="#d4d4d4"/><rect x="24" y="141" width="1" height="2" fill="#c8c8b0" opacity="0.6"/><rect x="16" y="143" width="5" height="2" fill="#ce9178"/><rect x="22" y="143" width="7" height="2" fill="#ce9178"/><rect x="30" y="143" width="1" height="2" fill="#d4d4d4"/><rect x="32" y="143" width="3" height="2" fill="#ce9178"/><rect x="36" y="143" width="4" height="2" fill="#ce9178"/><rect x="41" y="143" width="1" height="2" fill="#d4d4d4"/><rect x="43" y="143" width="7" height="2" fill="#ce9178"/><rect x="51" y="143" width="1" height="2" fill="#d4d4d4"/><rect x="53" y="143" width="5" height="2" fill="#ce9178"/><rect x="59" y="143" width="2" height="2" fill="#ce9178"/><rect x="62" y="143" width="1" height="2" fill="#d4d4d4"/><rect x="64" y="143" width="5" height="2" fill="#ce9178"/><rect x="70" y="143" width="9" height="2" fill="#ce9178"/><rect x="81" y="143" width="1" height="2" fill="#d4d4d4"/><rect x="83" y="143" width="6" height="2" fill="#ce9178"/><rect x="90" y="143" width="1" height="2" fill="#d4d4d4"/><rect x="92" y="143" width="6" height="2" fill="#ce9178"/><rect x="99" y="143" width="1" height="2" fill="#d4d4d4"/><rect x="100" y="143" width="1" height="2" fill="#ce9178"/><rect x="12" y="145" width="1" height="2" fill="#c8c8b0" opacity="0.6"/><rect x="13" y="145" width="1" height="2" fill="#d4d4d4"/><rect x="12" y="147" width="10" height="2" fill="#9cdcfe"/><rect x="23" y="147" width="1" height="2" fill="#d4d4d4"/><rect x="25" y="147" width="1" height="2" fill="#c8c8b0" opacity="0.6"/><rect x="16" y="149" width="6" height="2" fill="#ce9178"/><rect x="23" y="149" width="1" height="2" fill="#d4d4d4"/><rect x="25" y="149" width="7" height="2" fill="#ce9178"/><rect x="34" y="149" width="1" height="2" fill="#d4d4d4"/><rect x="36" y="149" width="7" height="2" fill="#ce9178"/><rect x="44" y="149" width="4" height="2" fill="#ce9178"/><rect x="49" y="149" width="1" height="2" fill="#d4d4d4"/><rect x="51" y="149" width="5" height="2" fill="#ce9178"/><rect x="57" y="149" width="2" height="2" fill="#ce9178"/><rect x="60" y="149" width="1" height="2" fill="#d4d4d4"/><rect x="62" y="149" width="3" height="2" fill="#ce9178"/><rect x="66" y="149" width="4" height="2" fill="#ce9178"/><rect x="71" y="149" width="1" height="2" fill="#d4d4d4"/><rect x="73" y="149" width="5" height="2" fill="#ce9178"/><rect x="79" y="149" width="4" height="2" fill="#ce9178"/><rect x="12" y="151" width="1" height="2" fill="#c8c8b0" opacity="0.6"/><rect x="13" y="151" width="1" height="2" fill="#d4d4d4"/><rect x="12" y="153" width="8" height="2" fill="#9cdcfe"/><rect x="21" y="153" width="1" height="2" fill="#d4d4d4"/><rect x="23" y="153" width="1" height="2" fill="#c8c8b0" opacity="0.6"/><rect x="16" y="155" width="8" height="2" fill="#ce9178"/><rect x="25" y="155" width="4" height="2" fill="#ce9178"/><rect x="30" y="155" width="1" height="2" fill="#d4d4d4"/><rect x="32" y="155" width="8" height="2" fill="#ce9178"/><rect x="41" y="155" width="3" height="2" fill="#ce9178"/><rect x="45" y="155" width="1" height="2" fill="#d4d4d4"/><rect x="47" y="155" width="9" height="2" fill="#ce9178"/><rect x="57" y="155" width="1" height="2" fill="#ce9178"/><rect x="59" y="155" width="1" height="2" fill="#d4d4d4"/><rect x="61" y="155" width="7" height="2" fill="#ce9178"/><rect x="12" y="157" width="1" height="2" fill="#c8c8b0" opacity="0.6"/><rect x="13" y="157" width="1" height="2" fill="#d4d4d4"/><rect x="12" y="159" width="8" height="2" fill="#9cdcfe"/><rect x="21" y="159" width="1" height="2" fill="#d4d4d4"/><rect x="23" y="159" width="1" height="2" fill="#c8c8b0" opacity="0.6"/><rect x="16" y="161" width="6" height="2" fill="#ce9178"/><rect x="23" y="161" width="1" height="2" fill="#d4d4d4"/><rect x="25" y="161" width="3" height="2" fill="#ce9178"/><rect x="29" y="161" width="3" height="2" fill="#ce9178"/><rect x="33" y="161" width="3" height="2" fill="#ce9178"/><rect x="37" y="161" width="1" height="2" fill="#d4d4d4"/><rect x="39" y="161" width="3" height="2" fill="#ce9178"/><rect x="43" y="161" width="9" height="2" fill="#ce9178"/><rect x="54" y="161" width="1" height="2" fill="#d4d4d4"/><rect x="56" y="161" width="6" height="2" fill="#ce9178"/><rect x="63" y="161" width="1" height="2" fill="#d4d4d4"/><rect x="65" y="161" width="5" height="2" fill="#ce9178"/><rect x="71" y="161" width="1" height="2" fill="#d4d4d4"/><rect x="73" y="161" width="5" height="2" fill="#ce9178"/><rect x="79" y="161" width="1" height="2" fill="#d4d4d4"/><rect x="81" y="161" width="5" height="2" fill="#ce9178"/><rect x="87" y="161" width="4" height="2" fill="#ce9178"/><rect x="92" y="161" width="5" height="2" fill="#ce9178"/><rect x="98" y="161" width="1" height="2" fill="#d4d4d4"/><rect x="100" y="161" width="5" height="2" fill="#ce9178"/><rect x="106" y="161" width="4" height="2" fill="#ce9178"/><rect x="111" y="161" width="1" height="2" fill="#d4d4d4"/><rect x="113" y="161" width="6" height="2" fill="#ce9178"/><rect x="12" y="163" width="1" height="2" fill="#c8c8b0" opacity="0.6"/><rect x="13" y="163" width="1" height="2" fill="#d4d4d4"/><rect x="12" y="165" width="7" height="2" fill="#9cdcfe"/><rect x="20" y="165" width="1" height="2" fill="#d4d4d4"/><rect x="22" y="165" width="1" height="2" fill="#c8c8b0" opacity="0.6"/><rect x="16" y="167" width="4" height="2" fill="#ce9178"/><rect x="21" y="167" width="4" height="2" fill="#ce9178"/><rect x="26" y="167" width="2" height="2" fill="#ce9178"/><rect x="12" y="169" width="1" height="2" fill="#c8c8b0" opacity="0.6"/><rect x="13" y="169" width="1" height="2" fill="#d4d4d4"/><rect x="12" y="171" width="9" height="2" fill="#9cdcfe"/><rect x="22" y="171" width="1" height="2" fill="#d4d4d4"/><rect x="24" y="171" width="1" height="2" fill="#c8c8b0" opacity="0.6"/><rect x="16" y="173" width="6" height="2" fill="#ce9178"/><rect x="23" y="173" width="1" height="2" fill="#d4d4d4"/><rect x="25" y="173" width="7" height="2" fill="#ce9178"/><rect x="34" y="173" width="1" height="2" fill="#d4d4d4"/><rect x="36" y="173" width="5" height="2" fill="#ce9178"/><rect x="42" y="173" width="7" height="2" fill="#ce9178"/><rect x="51" y="173" width="1" height="2" fill="#d4d4d4"/><rect x="53" y="173" width="2" height="2" fill="#ce9178"/><rect x="56" y="173" width="1" height="2" fill="#d4d4d4"/><rect x="58" y="173" width="7" height="2" fill="#ce9178"/><rect x="12" y="175" width="1" height="2" fill="#c8c8b0" opacity="0.6"/><rect x="13" y="175" width="1" height="2" fill="#d4d4d4"/><rect x="8" y="177" width="1" height="2" fill="#c8c8b0" opacity="0.6"/><rect x="8" y="181" width="6" height="2" fill="#9cdcfe"/><rect x="14" y="181" width="1" height="2" fill="#d4d4d4"/><rect x="15" y="181" width="5" height="2" fill="#4ec9b0"/><rect x="22" y="181" width="1" height="2" fill="#d4d4d4"/><rect x="24" y="181" width="1" height="2" fill="#c8c8b0" opacity="0.6"/><rect x="12" y="183" width="9" height="2" fill="#9cdcfe"/><rect x="22" y="183" width="1" height="2" fill="#d4d4d4"/><rect x="23" y="183" width="3" height="2" fill="#b5cea8"/><rect x="27" y="183" width="1" height="2" fill="#d4d4d4"/><rect x="12" y="185" width="8" height="2" fill="#9cdcfe"/><rect x="21" y="185" width="3" height="2" fill="#9cdcfe"/><rect x="25" y="185" width="1" height="2" fill="#d4d4d4"/><rect x="27" y="185" width="2" height="2" fill="#b5cea8"/><rect x="30" y="185" width="1" height="2" fill="#d4d4d4"/><rect x="12" y="187" width="8" height="2" fill="#9cdcfe"/><rect x="21" y="187" width="2" height="2" fill="#9cdcfe"/><rect x="24" y="187" width="1" height="2" fill="#d4d4d4"/><rect x="26" y="187" width="3" height="2" fill="#b5cea8"/><rect x="12" y="189" width="4" height="2" fill="#9cdcfe"/><rect x="17" y="189" width="6" height="2" fill="#9cdcfe"/><rect x="24" y="189" width="1" height="2" fill="#d4d4d4"/><rect x="26" y="189" width="4" height="2" fill="#b5cea8"/><rect x="12" y="191" width="9" height="2" fill="#9cdcfe"/><rect x="22" y="191" width="1" height="2" fill="#d4d4d4"/><rect x="24" y="191" width="2" height="2" fill="#b5cea8"/><rect x="12" y="193" width="9" height="2" fill="#9cdcfe"/><rect x="22" y="193" width="1" height="2" fill="#d4d4d4"/><rect x="24" y="193" width="3" height="2" fill="#b5cea8"/><rect x="12" y="195" width="8" height="2" fill="#9cdcfe"/><rect x="21" y="195" width="1" height="2" fill="#d4d4d4"/><rect x="23" y="195" width="2" height="2" fill="#b5cea8"/><rect x="12" y="197" width="8" height="2" fill="#9cdcfe"/><rect x="21" y="197" width="1" height="2" fill="#d4d4d4"/><rect x="24" y="197" width="2" height="2" fill="#b5cea8"/><rect x="8" y="199" width="1" height="2" fill="#c8c8b0" opacity="0.6"/><rect x="8" y="203" width="2" height="2" fill="#6a9955"/><rect x="11" y="203" width="21" height="2" fill="#6a9955"/><rect x="8" y="205" width="2" height="2" fill="#6a9955"/><rect x="11" y="205" width="2" height="2" fill="#6a9955"/><rect x="14" y="205" width="6" height="2" fill="#6a9955"/><rect x="21" y="205" width="5" height="2" fill="#6a9955"/><rect x="8" y="207" width="2" height="2" fill="#6a9955"/><rect x="11" y="207" width="21" height="2" fill="#6a9955"/><rect x="8" y="209" width="8" height="2" fill="#c586c0"/><rect x="17" y="209" width="16" height="2" fill="#dcdcaa"/><rect x="33" y="209" width="1" height="2" fill="#c8c8b0" opacity="0.6"/><rect x="34" y="209" width="9" height="2" fill="#9cdcfe"/><rect x="43" y="209" width="1" height="2" fill="#d4d4d4"/><rect x="45" y="209" width="15" height="2" fill="#9cdcfe"/><rect x="60" y="209" width="1" height="2" fill="#d4d4d4"/><rect x="62" y="209" width="14" height="2" fill="#9cdcfe"/><rect x="76" y="209" width="1" height="2" fill="#c8c8b0" opacity="0.6"/><rect x="12" y="211" width="5" height="2" fill="#569cd6"/><rect x="18" y="211" width="19" height="2" fill="#9cdcfe"/><rect x="38" y="211" width="1" height="2" fill="#d4d4d4"/><rect x="40" y="211" width="6" height="2" fill="#9cdcfe"/><rect x="46" y="211" width="1" height="2" fill="#d4d4d4"/><rect x="47" y="211" width="7" height="2" fill="#4ec9b0"/><rect x="54" y="211" width="1" height="2" fill="#c8c8b0" opacity="0.6"/><rect x="55" y="211" width="9" height="2" fill="#9cdcfe"/><rect x="64" y="211" width="1" height="2" fill="#c8c8b0" opacity="0.6"/><rect x="65" y="211" width="1" height="2" fill="#d4d4d4"/><rect x="66" y="211" width="11" height="2" fill="#4ec9b0"/><rect x="12" y="213" width="5" height="2" fill="#569cd6"/><rect x="18" y="213" width="18" height="2" fill="#9cdcfe"/><rect x="37" y="213" width="1" height="2" fill="#d4d4d4"/><rect x="39" y="213" width="1" height="2" fill="#c8c8b0" opacity="0.6"/><rect x="40" y="213" width="1" height="2" fill="#c8c8b0" opacity="0.6"/><rect x="12" y="215" width="3" height="2" fill="#c586c0"/><rect x="16" y="215" width="10" height="2" fill="#9cdcfe"/><rect x="26" y="215" width="1" height="2" fill="#d4d4d4"/><rect x="28" y="215" width="6" height="2" fill="#9cdcfe"/><rect x="35" y="215" width="2" height="2" fill="#c586c0"/><rect x="38" y="215" width="5" height="2" fill="#dcdcaa"/><rect x="43" y="215" width="1" height="2" fill="#c8c8b0" opacity="0.6"/><rect x="44" y="215" width="19" height="2" fill="#9cdcfe"/><rect x="63" y="215" width="1" height="2" fill="#c8c8b0" opacity="0.6"/><rect x="65" y="215" width="2" height="2" fill="#c586c0"/><rect x="16" y="217" width="5" height="2" fill="#569cd6"/><rect x="22" y="217" width="12" height="2" fill="#9cdcfe"/><rect x="35" y="217" width="1" height="2" fill="#d4d4d4"/><rect x="37" y="217" width="8" height="2" fill="#dcdcaa"/><rect x="45" y="217" width="1" height="2" fill="#c8c8b0" opacity="0.6"/><rect x="46" y="217" width="15" height="2" fill="#dcdcaa"/><rect x="61" y="217" width="1" height="2" fill="#c8c8b0" opacity="0.6"/><rect x="62" y="217" width="7" height="2" fill="#ce9178"/><rect x="69" y="217" width="1" height="2" fill="#d4d4d4"/><rect x="71" y="217" width="10" height="2" fill="#9cdcfe"/><rect x="81" y="217" width="1" height="2" fill="#c8c8b0" opacity="0.6"/><rect x="82" y="217" width="1" height="2" fill="#c8c8b0" opacity="0.6"/><rect x="84" y="217" width="2" height="2" fill="#d4d4d4"/><rect x="87" y="217" width="1" height="2" fill="#b5cea8"/><rect x="16" y="219" width="2" height="2" fill="#c586c0"/><rect x="19" y="219" width="12" height="2" fill="#9cdcfe"/><rect x="32" y="219" width="1" height="2" fill="#d4d4d4"/><rect x="34" y="219" width="6" height="2" fill="#9cdcfe"/><rect x="41" y="219" width="4" height="2" fill="#c586c0"/><rect x="20" y="221" width="5" height="2" fill="#dcdcaa"/><rect x="25" y="221" width="1" height="2" fill="#dcdcaa"/><rect x="26" y="221" width="6" height="2" fill="#dcdcaa"/><rect x="32" y="221" width="1" height="2" fill="#c8c8b0" opacity="0.6"/><rect x="33" y="221" width="18" height="2" fill="#9cdcfe"/><rect x="51" y="221" width="1" height="2" fill="#d4d4d4"/><rect x="53" y="221" width="10" height="2" fill="#9cdcfe"/><rect x="63" y="221" width="1" height="2" fill="#c8c8b0" opacity="0.6"/><rect x="16" y="223" width="3" height="2" fill="#c586c0"/><rect x="12" y="225" width="3" height="2" fill="#c586c0"/><rect x="12" y="227" width="2" height="2" fill="#c586c0"/><rect x="15" y="227" width="1" height="2" fill="#d4d4d4"/><rect x="16" y="227" width="18" height="2" fill="#9cdcfe"/><rect x="35" y="227" width="1" height="2" fill="#d4d4d4"/><rect x="37" y="227" width="1" height="2" fill="#b5cea8"/><rect x="39" y="227" width="4" height="2" fill="#c586c0"/><rect x="16" y="229" width="5" height="2" fill="#569cd6"/><rect x="22" y="229" width="10" height="2" fill="#9cdcfe"/><rect x="33" y="229" width="1" height="2" fill="#d4d4d4"/><rect x="35" y="229" width="1" height="2" fill="#c8c8b0" opacity="0.6"/><rect x="36" y="229" width="1" height="2" fill="#c8c8b0" opacity="0.6"/><rect x="16" y="231" width="3" height="2" fill="#c586c0"/><rect x="20" y="231" width="1" height="2" fill="#9cdcfe"/><rect x="21" y="231" width="1" height="2" fill="#d4d4d4"/><rect x="23" y="231" width="8" height="2" fill="#9cdcfe"/><rect x="32" y="231" width="2" height="2" fill="#c586c0"/><rect x="35" y="231" width="6" height="2" fill="#dcdcaa"/><rect x="41" y="231" width="1" height="2" fill="#c8c8b0" opacity="0.6"/><rect x="42" y="231" width="18" height="2" fill="#9cdcfe"/><rect x="60" y="231" width="1" height="2" fill="#c8c8b0" opacity="0.6"/><rect x="62" y="231" width="2" height="2" fill="#c586c0"/><rect x="20" y="233" width="5" height="2" fill="#569cd6"/><rect x="26" y="233" width="4" height="2" fill="#9cdcfe"/><rect x="31" y="233" width="1" height="2" fill="#d4d4d4"/><rect x="33" y="233" width="14" height="2" fill="#dcdcaa"/><rect x="47" y="233" width="1" height="2" fill="#c8c8b0" opacity="0.6"/><rect x="48" y="233" width="8" height="2" fill="#9cdcfe"/><rect x="56" y="233" width="1" height="2" fill="#c8c8b0" opacity="0.6"/><rect x="20" y="235" width="5" height="2" fill="#dcdcaa"/><rect x="25" y="235" width="1" height="2" fill="#dcdcaa"/><rect x="26" y="235" width="6" height="2" fill="#dcdcaa"/><rect x="32" y="235" width="1" height="2" fill="#c8c8b0" opacity="0.6"/><rect x="33" y="235" width="10" height="2" fill="#9cdcfe"/><rect x="43" y="235" width="1" height="2" fill="#d4d4d4"/><rect x="45" y="235" width="4" height="2" fill="#9cdcfe"/><rect x="50" y="235" width="3" height="2" fill="#d4d4d4" opacity="0.45"/><rect x="54" y="235" width="4" height="2" fill="#9cdcfe"/><rect x="58" y="235" width="1" height="2" fill="#d4d4d4"/><rect x="59" y="235" width="5" height="2" fill="#4ec9b0"/><rect x="65" y="235" width="2" height="2" fill="#d4d4d4"/><rect x="68" y="235" width="8" height="2" fill="#9cdcfe"/><rect x="76" y="235" width="1" height="2" fill="#c8c8b0" opacity="0.6"/><rect x="16" y="237" width="3" height="2" fill="#c586c0"/><rect x="16" y="239" width="6" height="2" fill="#c586c0"/><rect x="23" y="239" width="5" height="2" fill="#569cd6"/><rect x="28" y="239" width="1" height="2" fill="#d4d4d4"/><rect x="30" y="239" width="10" height="2" fill="#9cdcfe"/><rect x="12" y="241" width="3" height="2" fill="#c586c0"/><rect x="12" y="243" width="6" height="2" fill="#c586c0"/><rect x="19" y="243" width="4" height="2" fill="#569cd6"/><rect x="23" y="243" width="1" height="2" fill="#d4d4d4"/><rect x="25" y="243" width="3" height="2" fill="#569cd6"/><rect x="8" y="245" width="3" height="2" fill="#c586c0"/><rect x="8" y="249" width="2" height="2" fill="#6a9955"/><rect x="11" y="249" width="21" height="2" fill="#6a9955"/><rect x="8" y="251" width="2" height="2" fill="#6a9955"/><rect x="11" y="251" width="2" height="2" fill="#6a9955"/><rect x="14" y="251" width="10" height="2" fill="#6a9955"/><rect x="25" y="251" width="1" height="2" fill="#6a9955"/><rect x="27" y="251" width="5" height="2" fill="#6a9955"/><rect x="8" y="253" width="2" height="2" fill="#6a9955"/><rect x="11" y="253" width="21" height="2" fill="#6a9955"/><rect x="8" y="255" width="6" height="2" fill="#9cdcfe"/><rect x="14" y="255" width="1" height="2" fill="#d4d4d4"/><rect x="15" y="255" width="10" height="2" fill="#4ec9b0"/><rect x="26" y="255" width="1" height="2" fill="#d4d4d4"/><rect x="28" y="255" width="1" height="2" fill="#c8c8b0" opacity="0.6"/><rect x="12" y="257" width="1" height="2" fill="#c8c8b0" opacity="0.6"/><rect x="14" y="257" width="5" height="2" fill="#9cdcfe"/><rect x="20" y="257" width="1" height="2" fill="#d4d4d4"/><rect x="22" y="257" width="27" height="2" fill="#ce9178"/><rect x="49" y="257" width="1" height="2" fill="#d4d4d4"/><rect x="51" y="257" width="9" height="2" fill="#9cdcfe"/><rect x="61" y="257" width="1" height="2" fill="#d4d4d4"/><rect x="63" y="257" width="12" height="2" fill="#ce9178"/><rect x="75" y="257" width="1" height="2" fill="#d4d4d4"/><rect x="77" y="257" width="14" height="2" fill="#9cdcfe"/><rect x="92" y="257" width="1" height="2" fill="#d4d4d4"/><rect x="94" y="257" width="8" height="2" fill="#ce9178"/><rect x="103" y="257" width="8" height="2" fill="#ce9178"/><rect x="112" y="257" width="1" height="2" fill="#c8c8b0" opacity="0.6"/><rect x="113" y="257" width="1" height="2" fill="#d4d4d4"/><rect x="12" y="259" width="1" height="2" fill="#c8c8b0" opacity="0.6"/><rect x="14" y="259" width="5" height="2" fill="#9cdcfe"/><rect x="20" y="259" width="1" height="2" fill="#d4d4d4"/><rect x="22" y="259" width="28" height="2" fill="#ce9178"/><rect x="50" y="259" width="1" height="2" fill="#d4d4d4"/><rect x="52" y="259" width="9" height="2" fill="#9cdcfe"/><rect x="62" y="259" width="1" height="2" fill="#d4d4d4"/><rect x="64" y="259" width="13" height="2" fill="#ce9178"/><rect x="77" y="259" width="1" height="2" fill="#d4d4d4"/><rect x="79" y="259" width="14" height="2" fill="#9cdcfe"/><rect x="94" y="259" width="1" height="2" fill="#d4d4d4"/><rect x="96" y="259" width="8" height="2" fill="#ce9178"/><rect x="105" y="259" width="9" height="2" fill="#ce9178"/><rect x="115" y="259" width="1" height="2" fill="#c8c8b0" opacity="0.6"/><rect x="116" y="259" width="1" height="2" fill="#d4d4d4"/><rect x="12" y="261" width="1" height="2" fill="#c8c8b0" opacity="0.6"/><rect x="14" y="261" width="5" height="2" fill="#9cdcfe"/><rect x="20" y="261" width="1" height="2" fill="#d4d4d4"/><rect x="22" y="261" width="29" height="2" fill="#ce9178"/><rect x="51" y="261" width="1" height="2" fill="#d4d4d4"/><rect x="53" y="261" width="9" height="2" fill="#9cdcfe"/><rect x="63" y="261" width="1" height="2" fill="#d4d4d4"/><rect x="65" y="261" width="20" height="2" fill="#ce9178"/><rect x="85" y="261" width="1" height="2" fill="#d4d4d4"/><rect x="87" y="261" width="14" height="2" fill="#9cdcfe"/><rect x="102" y="261" width="1" height="2" fill="#d4d4d4"/><rect x="104" y="261" width="8" height="2" fill="#ce9178"/><rect x="113" y="261" width="6" height="2" fill="#ce9178"/><rect x="12" y="263" width="1" height="2" fill="#c8c8b0" opacity="0.6"/><rect x="14" y="263" width="5" height="2" fill="#9cdcfe"/><rect x="20" y="263" width="1" height="2" fill="#d4d4d4"/><rect x="22" y="263" width="26" height="2" fill="#ce9178"/><rect x="48" y="263" width="1" height="2" fill="#d4d4d4"/><rect x="50" y="263" width="9" height="2" fill="#9cdcfe"/><rect x="60" y="263" width="1" height="2" fill="#d4d4d4"/><rect x="62" y="263" width="11" height="2" fill="#ce9178"/><rect x="73" y="263" width="1" height="2" fill="#d4d4d4"/><rect x="75" y="263" width="14" height="2" fill="#9cdcfe"/><rect x="90" y="263" width="1" height="2" fill="#d4d4d4"/><rect x="92" y="263" width="8" height="2" fill="#ce9178"/><rect x="101" y="263" width="6" height="2" fill="#ce9178"/><rect x="108" y="263" width="1" height="2" fill="#c8c8b0" opacity="0.6"/><rect x="8" y="265" width="1" height="2" fill="#c8c8b0" opacity="0.6"/><rect x="8" y="269" width="6" height="2" fill="#9cdcfe"/><rect x="14" y="269" width="1" height="2" fill="#d4d4d4"/><rect x="15" y="269" width="9" height="2" fill="#4ec9b0"/><rect x="25" y="269" width="1" height="2" fill="#d4d4d4"/><rect x="27" y="269" width="1" height="2" fill="#c8c8b0" opacity="0.6"/><rect x="12" y="271" width="1" height="2" fill="#c8c8b0" opacity="0.6"/><rect x="14" y="271" width="5" height="2" fill="#9cdcfe"/><rect x="20" y="271" width="1" height="2" fill="#d4d4d4"/><rect x="22" y="271" width="22" height="2" fill="#ce9178"/><rect x="44" y="271" width="1" height="2" fill="#d4d4d4"/><rect x="46" y="271" width="9" height="2" fill="#9cdcfe"/><rect x="56" y="271" width="1" height="2" fill="#d4d4d4"/><rect x="58" y="271" width="20" height="2" fill="#ce9178"/><rect x="78" y="271" width="1" height="2" fill="#d4d4d4"/><rect x="80" y="271" width="14" height="2" fill="#9cdcfe"/><rect x="95" y="271" width="1" height="2" fill="#d4d4d4"/><rect x="97" y="271" width="5" height="2" fill="#ce9178"/><rect x="103" y="271" width="6" height="2" fill="#ce9178"/><rect x="110" y="271" width="5" height="2" fill="#ce9178"/><rect x="115" y="271" width="1" height="2" fill="#d4d4d4"/><rect x="117" y="271" width="2" height="2" fill="#9cdcfe"/><rect x="12" y="273" width="1" height="2" fill="#c8c8b0" opacity="0.6"/><rect x="14" y="273" width="5" height="2" fill="#9cdcfe"/><rect x="20" y="273" width="1" height="2" fill="#d4d4d4"/><rect x="22" y="273" width="26" height="2" fill="#ce9178"/><rect x="48" y="273" width="1" height="2" fill="#d4d4d4"/><rect x="50" y="273" width="9" height="2" fill="#9cdcfe"/><rect x="60" y="273" width="1" height="2" fill="#d4d4d4"/><rect x="62" y="273" width="13" height="2" fill="#ce9178"/><rect x="75" y="273" width="1" height="2" fill="#d4d4d4"/><rect x="77" y="273" width="14" height="2" fill="#9cdcfe"/><rect x="92" y="273" width="1" height="2" fill="#d4d4d4"/><rect x="94" y="273" width="4" height="2" fill="#ce9178"/><rect x="99" y="273" width="3" height="2" fill="#ce9178"/><rect x="103" y="273" width="6" height="2" fill="#ce9178"/><rect x="109" y="273" width="1" height="2" fill="#d4d4d4"/><rect x="111" y="273" width="4" height="2" fill="#9cdcfe"/><rect x="116" y="273" width="1" height="2" fill="#d4d4d4"/><rect x="118" y="273" width="1" height="2" fill="#ce9178"/><rect x="8" y="275" width="1" height="2" fill="#c8c8b0" opacity="0.6"/><rect x="8" y="279" width="6" height="2" fill="#9cdcfe"/><rect x="14" y="279" width="1" height="2" fill="#d4d4d4"/><rect x="15" y="279" width="4" height="2" fill="#4ec9b0"/><rect x="20" y="279" width="1" height="2" fill="#d4d4d4"/><rect x="22" y="279" width="1" height="2" fill="#c8c8b0" opacity="0.6"/><rect x="12" y="281" width="1" height="2" fill="#c8c8b0" opacity="0.6"/><rect x="14" y="281" width="5" height="2" fill="#9cdcfe"/><rect x="20" y="281" width="1" height="2" fill="#d4d4d4"/><rect x="22" y="281" width="25" height="2" fill="#ce9178"/><rect x="47" y="281" width="1" height="2" fill="#d4d4d4"/><rect x="49" y="281" width="9" height="2" fill="#9cdcfe"/><rect x="59" y="281" width="1" height="2" fill="#d4d4d4"/><rect x="61" y="281" width="10" height="2" fill="#ce9178"/><rect x="71" y="281" width="1" height="2" fill="#d4d4d4"/><rect x="73" y="281" width="14" height="2" fill="#9cdcfe"/><rect x="88" y="281" width="1" height="2" fill="#d4d4d4"/><rect x="90" y="281" width="5" height="2" fill="#ce9178"/><rect x="96" y="281" width="6" height="2" fill="#ce9178"/><rect x="103" y="281" width="4" height="2" fill="#ce9178"/><rect x="108" y="281" width="1" height="2" fill="#c8c8b0" opacity="0.6"/><rect x="109" y="281" width="1" height="2" fill="#d4d4d4"/><rect x="12" y="283" width="2" height="2" fill="#6a9955"/><rect x="15" y="283" width="3" height="2" fill="#6a9955"/><rect x="19" y="283" width="4" height="2" fill="#6a9955"/><rect x="24" y="283" width="6" height="2" fill="#6a9955"/><rect x="31" y="283" width="4" height="2" fill="#6a9955"/><rect x="12" y="285" width="2" height="2" fill="#6a9955"/><rect x="15" y="285" width="1" height="2" fill="#6a9955"/><rect x="17" y="285" width="5" height="2" fill="#6a9955"/><rect x="23" y="285" width="1" height="2" fill="#6a9955"/><rect x="25" y="285" width="26" height="2" fill="#6a9955"/><rect x="52" y="285" width="9" height="2" fill="#6a9955"/><rect x="62" y="285" width="1" height="2" fill="#6a9955"/><rect x="64" y="285" width="15" height="2" fill="#6a9955"/><rect x="80" y="285" width="14" height="2" fill="#6a9955"/><rect x="95" y="285" width="1" height="2" fill="#6a9955"/><rect x="97" y="285" width="5" height="2" fill="#6a9955"/><rect x="103" y="285" width="4" height="2" fill="#6a9955"/><rect x="108" y="285" width="4" height="2" fill="#6a9955"/><rect x="113" y="285" width="2" height="2" fill="#6a9955"/><rect x="8" y="287" width="1" height="2" fill="#c8c8b0" opacity="0.6"/><rect x="8" y="293" width="6" height="2" fill="#9cdcfe"/><rect x="14" y="293" width="1" height="2" fill="#d4d4d4"/><rect x="15" y="293" width="5" height="2" fill="#4ec9b0"/><rect x="21" y="293" width="1" height="2" fill="#d4d4d4"/><rect x="23" y="293" width="1" height="2" fill="#c8c8b0" opacity="0.6"/><rect x="12" y="295" width="1" height="2" fill="#c8c8b0" opacity="0.6"/><rect x="14" y="295" width="5" height="2" fill="#9cdcfe"/><rect x="20" y="295" width="1" height="2" fill="#d4d4d4"/><rect x="22" y="295" width="22" height="2" fill="#ce9178"/><rect x="44" y="295" width="1" height="2" fill="#d4d4d4"/><rect x="46" y="295" width="9" height="2" fill="#9cdcfe"/><rect x="56" y="295" width="1" height="2" fill="#d4d4d4"/><rect x="58" y="295" width="6" height="2" fill="#ce9178"/><rect x="64" y="295" width="1" height="2" fill="#d4d4d4"/><rect x="66" y="295" width="14" height="2" fill="#9cdcfe"/><rect x="81" y="295" width="1" height="2" fill="#d4d4d4"/><rect x="83" y="295" width="8" height="2" fill="#ce9178"/><rect x="92" y="295" width="3" height="2" fill="#ce9178"/><rect x="96" y="295" width="5" height="2" fill="#ce9178"/><rect x="102" y="295" width="4" height="2" fill="#ce9178"/><rect x="107" y="295" width="2" height="2" fill="#ce9178"/><rect x="109" y="295" width="1" height="2" fill="#d4d4d4"/><rect x="111" y="295" width="8" height="2" fill="#9cdcfe"/><rect x="12" y="297" width="1" height="2" fill="#c8c8b0" opacity="0.6"/><rect x="14" y="297" width="5" height="2" fill="#9cdcfe"/><rect x="20" y="297" width="1" height="2" fill="#d4d4d4"/><rect x="22" y="297" width="22" height="2" fill="#ce9178"/><rect x="44" y="297" width="1" height="2" fill="#d4d4d4"/><rect x="46" y="297" width="9" height="2" fill="#9cdcfe"/><rect x="56" y="297" width="1" height="2" fill="#d4d4d4"/><rect x="58" y="297" width="6" height="2" fill="#ce9178"/><rect x="64" y="297" width="1" height="2" fill="#d4d4d4"/><rect x="66" y="297" width="14" height="2" fill="#9cdcfe"/><rect x="81" y="297" width="1" height="2" fill="#d4d4d4"/><rect x="83" y="297" width="8" height="2" fill="#ce9178"/><rect x="92" y="297" width="3" height="2" fill="#ce9178"/><rect x="96" y="297" width="5" height="2" fill="#ce9178"/><rect x="102" y="297" width="4" height="2" fill="#ce9178"/><rect x="107" y="297" width="2" height="2" fill="#ce9178"/><rect x="109" y="297" width="1" height="2" fill="#d4d4d4"/><rect x="111" y="297" width="8" height="2" fill="#9cdcfe"/><rect x="12" y="299" width="1" height="2" fill="#c8c8b0" opacity="0.6"/><rect x="14" y="299" width="5" height="2" fill="#9cdcfe"/><rect x="20" y="299" width="1" height="2" fill="#d4d4d4"/><rect x="22" y="299" width="22" height="2" fill="#ce9178"/><rect x="44" y="299" width="1" height="2" fill="#d4d4d4"/><rect x="46" y="299" width="9" height="2" fill="#9cdcfe"/><rect x="56" y="299" width="1" height="2" fill="#d4d4d4"/><rect x="58" y="299" width="6" height="2" fill="#ce9178"/><rect x="64" y="299" width="1" height="2" fill="#d4d4d4"/><rect x="66" y="299" width="14" height="2" fill="#9cdcfe"/><rect x="81" y="299" width="1" height="2" fill="#d4d4d4"/><rect x="83" y="299" width="8" height="2" fill="#ce9178"/><rect x="92" y="299" width="3" height="2" fill="#ce9178"/><rect x="96" y="299" width="5" height="2" fill="#ce9178"/><rect x="102" y="299" width="4" height="2" fill="#ce9178"/><rect x="107" y="299" width="2" height="2" fill="#ce9178"/><rect x="109" y="299" width="1" height="2" fill="#d4d4d4"/><rect x="111" y="299" width="8" height="2" fill="#9cdcfe"/><rect x="12" y="301" width="1" height="2" fill="#c8c8b0" opacity="0.6"/><rect x="14" y="301" width="5" height="2" fill="#9cdcfe"/><rect x="20" y="301" width="1" height="2" fill="#d4d4d4"/><rect x="22" y="301" width="22" height="2" fill="#ce9178"/><rect x="44" y="301" width="1" height="2" fill="#d4d4d4"/><rect x="46" y="301" width="9" height="2" fill="#9cdcfe"/><rect x="56" y="301" width="1" height="2" fill="#d4d4d4"/><rect x="58" y="301" width="6" height="2" fill="#ce9178"/><rect x="64" y="301" width="1" height="2" fill="#d4d4d4"/><rect x="66" y="301" width="14" height="2" fill="#9cdcfe"/><rect x="81" y="301" width="1" height="2" fill="#d4d4d4"/><rect x="83" y="301" width="8" height="2" fill="#ce9178"/><rect x="92" y="301" width="3" height="2" fill="#ce9178"/><rect x="96" y="301" width="5" height="2" fill="#ce9178"/><rect x="102" y="301" width="4" height="2" fill="#ce9178"/><rect x="107" y="301" width="2" height="2" fill="#ce9178"/><rect x="109" y="301" width="1" height="2" fill="#d4d4d4"/><rect x="111" y="301" width="8" height="2" fill="#9cdcfe"/><rect x="8" y="303" width="1" height="2" fill="#c8c8b0" opacity="0.6"/><rect x="8" y="307" width="2" height="2" fill="#6a9955"/><rect x="11" y="307" width="21" height="2" fill="#6a9955"/><rect x="8" y="309" width="2" height="2" fill="#6a9955"/><rect x="11" y="309" width="4" height="2" fill="#6a9955"/><rect x="16" y="309" width="3" height="2" fill="#6a9955"/><rect x="20" y="309" width="5" height="2" fill="#6a9955"/><rect x="8" y="311" width="2" height="2" fill="#6a9955"/><rect x="11" y="311" width="21" height="2" fill="#6a9955"/><rect x="8" y="313" width="6" height="2" fill="#9cdcfe"/><rect x="14" y="313" width="1" height="2" fill="#d4d4d4"/><rect x="15" y="313" width="15" height="2" fill="#4ec9b0"/><rect x="31" y="313" width="1" height="2" fill="#d4d4d4"/><rect x="33" y="313" width="1" height="2" fill="#c8c8b0" opacity="0.6"/><rect x="12" y="315" width="1" height="2" fill="#c8c8b0" opacity="0.6"/><rect x="14" y="315" width="5" height="2" fill="#9cdcfe"/><rect x="21" y="315" width="1" height="2" fill="#d4d4d4"/><rect x="23" y="315" width="4" height="2" fill="#ce9178"/><rect x="28" y="315" width="3" height="2" fill="#ce9178"/><rect x="34" y="315" width="6" height="2" fill="#ce9178"/><rect x="41" y="315" width="2" height="2" fill="#ce9178"/><rect x="44" y="315" width="1" height="2" fill="#d4d4d4"/><rect x="46" y="315" width="4" height="2" fill="#9cdcfe"/><rect x="51" y="315" width="6" height="2" fill="#9cdcfe"/><rect x="58" y="315" width="1" height="2" fill="#d4d4d4"/><rect x="60" y="315" width="9" height="2" fill="#ce9178"/><rect x="70" y="315" width="1" height="2" fill="#d4d4d4"/><rect x="71" y="315" width="7" height="2" fill="#9cdcfe"/><rect x="80" y="315" width="1" height="2" fill="#d4d4d4"/><rect x="83" y="315" width="7" height="2" fill="#ce9178"/><rect x="91" y="315" width="4" height="2" fill="#ce9178"/><rect x="96" y="315" width="7" height="2" fill="#ce9178"/><rect x="104" y="315" width="9" height="2" fill="#ce9178"/><rect x="114" y="315" width="5" height="2" fill="#ce9178"/><rect x="12" y="317" width="1" height="2" fill="#c8c8b0" opacity="0.6"/><rect x="14" y="317" width="5" height="2" fill="#9cdcfe"/><rect x="21" y="317" width="1" height="2" fill="#d4d4d4"/><rect x="23" y="317" width="6" height="2" fill="#ce9178"/><rect x="30" y="317" width="2" height="2" fill="#ce9178"/><rect x="34" y="317" width="6" height="2" fill="#ce9178"/><rect x="41" y="317" width="3" height="2" fill="#ce9178"/><rect x="45" y="317" width="1" height="2" fill="#d4d4d4"/><rect x="47" y="317" width="3" height="2" fill="#9cdcfe"/><rect x="51" y="317" width="4" height="2" fill="#9cdcfe"/><rect x="56" y="317" width="2" height="2" fill="#9cdcfe"/><rect x="59" y="317" width="1" height="2" fill="#d4d4d4"/><rect x="61" y="317" width="7" height="2" fill="#ce9178"/><rect x="69" y="317" width="2" height="2" fill="#ce9178"/><rect x="72" y="317" width="1" height="2" fill="#d4d4d4"/><rect x="73" y="317" width="7" height="2" fill="#9cdcfe"/><rect x="82" y="317" width="1" height="2" fill="#d4d4d4"/><rect x="85" y="317" width="8" height="2" fill="#ce9178"/><rect x="94" y="317" width="9" height="2" fill="#ce9178"/><rect x="104" y="317" width="8" height="2" fill="#ce9178"/><rect x="113" y="317" width="4" height="2" fill="#ce9178"/><rect x="118" y="317" width="1" height="2" fill="#ce9178"/><rect x="12" y="319" width="1" height="2" fill="#c8c8b0" opacity="0.6"/><rect x="14" y="319" width="5" height="2" fill="#9cdcfe"/><rect x="21" y="319" width="1" height="2" fill="#d4d4d4"/><rect x="23" y="319" width="6" height="2" fill="#ce9178"/><rect x="30" y="319" width="2" height="2" fill="#ce9178"/><rect x="34" y="319" width="3" height="2" fill="#ce9178"/><rect x="38" y="319" width="7" height="2" fill="#ce9178"/><rect x="46" y="319" width="1" height="2" fill="#d4d4d4"/><rect x="48" y="319" width="8" height="2" fill="#9cdcfe"/><rect x="57" y="319" width="2" height="2" fill="#9cdcfe"/><rect x="60" y="319" width="1" height="2" fill="#d4d4d4"/><rect x="62" y="319" width="3" height="2" fill="#ce9178"/><rect x="66" y="319" width="4" height="2" fill="#ce9178"/><rect x="71" y="319" width="1" height="2" fill="#d4d4d4"/><rect x="72" y="319" width="7" height="2" fill="#9cdcfe"/><rect x="81" y="319" width="1" height="2" fill="#d4d4d4"/><rect x="84" y="319" width="9" height="2" fill="#ce9178"/><rect x="94" y="319" width="3" height="2" fill="#ce9178"/><rect x="98" y="319" width="4" height="2" fill="#ce9178"/><rect x="103" y="319" width="9" height="2" fill="#ce9178"/><rect x="113" y="319" width="6" height="2" fill="#ce9178"/><rect x="12" y="321" width="1" height="2" fill="#c8c8b0" opacity="0.6"/><rect x="14" y="321" width="5" height="2" fill="#9cdcfe"/><rect x="21" y="321" width="1" height="2" fill="#d4d4d4"/><rect x="23" y="321" width="5" height="2" fill="#ce9178"/><rect x="29" y="321" width="3" height="2" fill="#ce9178"/><rect x="34" y="321" width="3" height="2" fill="#ce9178"/><rect x="38" y="321" width="5" height="2" fill="#ce9178"/><rect x="44" y="321" width="1" height="2" fill="#d4d4d4"/><rect x="46" y="321" width="9" height="2" fill="#9cdcfe"/><rect x="56" y="321" width="1" height="2" fill="#9cdcfe"/><rect x="58" y="321" width="1" height="2" fill="#d4d4d4"/><rect x="60" y="321" width="8" height="2" fill="#ce9178"/><rect x="69" y="321" width="1" height="2" fill="#d4d4d4"/><rect x="70" y="321" width="7" height="2" fill="#9cdcfe"/><rect x="79" y="321" width="1" height="2" fill="#d4d4d4"/><rect x="82" y="321" width="6" height="2" fill="#ce9178"/><rect x="89" y="321" width="5" height="2" fill="#ce9178"/><rect x="95" y="321" width="6" height="2" fill="#ce9178"/><rect x="102" y="321" width="9" height="2" fill="#ce9178"/><rect x="112" y="321" width="3" height="2" fill="#ce9178"/><rect x="116" y="321" width="3" height="2" fill="#ce9178"/><rect x="12" y="323" width="1" height="2" fill="#c8c8b0" opacity="0.6"/><rect x="14" y="323" width="5" height="2" fill="#9cdcfe"/><rect x="21" y="323" width="1" height="2" fill="#d4d4d4"/><rect x="23" y="323" width="8" height="2" fill="#ce9178"/><rect x="34" y="323" width="6" height="2" fill="#ce9178"/><rect x="41" y="323" width="3" height="2" fill="#ce9178"/><rect x="45" y="323" width="1" height="2" fill="#d4d4d4"/><rect x="47" y="323" width="7" height="2" fill="#9cdcfe"/><rect x="55" y="323" width="3" height="2" fill="#9cdcfe"/><rect x="59" y="323" width="1" height="2" fill="#d4d4d4"/><rect x="61" y="323" width="4" height="2" fill="#ce9178"/><rect x="66" y="323" width="4" height="2" fill="#ce9178"/><rect x="71" y="323" width="1" height="2" fill="#d4d4d4"/><rect x="72" y="323" width="7" height="2" fill="#9cdcfe"/><rect x="81" y="323" width="1" height="2" fill="#d4d4d4"/><rect x="84" y="323" width="3" height="2" fill="#ce9178"/><rect x="88" y="323" width="4" height="2" fill="#ce9178"/><rect x="93" y="323" width="7" height="2" fill="#ce9178"/><rect x="101" y="323" width="4" height="2" fill="#ce9178"/><rect x="106" y="323" width="7" height="2" fill="#ce9178"/><rect x="114" y="323" width="5" height="2" fill="#ce9178"/><rect x="12" y="325" width="1" height="2" fill="#c8c8b0" opacity="0.6"/><rect x="14" y="325" width="5" height="2" fill="#9cdcfe"/><rect x="21" y="325" width="1" height="2" fill="#d4d4d4"/><rect x="23" y="325" width="5" height="2" fill="#ce9178"/><rect x="29" y="325" width="3" height="2" fill="#ce9178"/><rect x="34" y="325" width="8" height="2" fill="#ce9178"/><rect x="44" y="325" width="1" height="2" fill="#d4d4d4"/><rect x="46" y="325" width="5" height="2" fill="#9cdcfe"/><rect x="52" y="325" width="4" height="2" fill="#9cdcfe"/><rect x="58" y="325" width="1" height="2" fill="#d4d4d4"/><rect x="60" y="325" width="7" height="2" fill="#ce9178"/><rect x="68" y="325" width="3" height="2" fill="#ce9178"/><rect x="72" y="325" width="1" height="2" fill="#d4d4d4"/><rect x="73" y="325" width="7" height="2" fill="#9cdcfe"/><rect x="82" y="325" width="1" height="2" fill="#d4d4d4"/><rect x="85" y="325" width="9" height="2" fill="#ce9178"/><rect x="95" y="325" width="5" height="2" fill="#ce9178"/><rect x="101" y="325" width="3" height="2" fill="#ce9178"/><rect x="105" y="325" width="4" height="2" fill="#ce9178"/><rect x="110" y="325" width="5" height="2" fill="#ce9178"/><rect x="116" y="325" width="3" height="2" fill="#ce9178"/><rect x="12" y="327" width="1" height="2" fill="#c8c8b0" opacity="0.6"/><rect x="14" y="327" width="5" height="2" fill="#9cdcfe"/><rect x="21" y="327" width="1" height="2" fill="#d4d4d4"/><rect x="23" y="327" width="4" height="2" fill="#ce9178"/><rect x="28" y="327" width="4" height="2" fill="#ce9178"/><rect x="34" y="327" width="6" height="2" fill="#ce9178"/><rect x="41" y="327" width="2" height="2" fill="#ce9178"/><rect x="44" y="327" width="1" height="2" fill="#d4d4d4"/><rect x="46" y="327" width="6" height="2" fill="#9cdcfe"/><rect x="53" y="327" width="4" height="2" fill="#9cdcfe"/><rect x="58" y="327" width="1" height="2" fill="#d4d4d4"/><rect x="60" y="327" width="4" height="2" fill="#ce9178"/><rect x="65" y="327" width="4" height="2" fill="#ce9178"/><rect x="70" y="327" width="1" height="2" fill="#d4d4d4"/><rect x="71" y="327" width="7" height="2" fill="#9cdcfe"/><rect x="80" y="327" width="1" height="2" fill="#d4d4d4"/><rect x="83" y="327" width="9" height="2" fill="#ce9178"/><rect x="93" y="327" width="6" height="2" fill="#ce9178"/><rect x="100" y="327" width="9" height="2" fill="#ce9178"/><rect x="110" y="327" width="3" height="2" fill="#ce9178"/><rect x="114" y="327" width="1" height="2" fill="#ce9178"/><rect x="116" y="327" width="1" height="2" fill="#c8c8b0" opacity="0.6"/><rect x="8" y="329" width="1" height="2" fill="#c8c8b0" opacity="0.6"/><rect x="8" y="333" width="2" height="2" fill="#6a9955"/><rect x="11" y="333" width="21" height="2" fill="#6a9955"/><rect x="8" y="335" width="2" height="2" fill="#6a9955"/><rect x="11" y="335" width="8" height="2" fill="#6a9955"/><rect x="20" y="335" width="5" height="2" fill="#6a9955"/><rect x="8" y="337" width="2" height="2" fill="#6a9955"/><rect x="11" y="337" width="21" height="2" fill="#6a9955"/><rect x="8" y="341" width="6" height="2" fill="#9cdcfe"/><rect x="14" y="341" width="1" height="2" fill="#d4d4d4"/><rect x="15" y="341" width="15" height="2" fill="#4ec9b0"/><rect x="31" y="341" width="1" height="2" fill="#d4d4d4"/><rect x="33" y="341" width="1" height="2" fill="#c8c8b0" opacity="0.6"/><rect x="12" y="343" width="5" height="2" fill="#9cdcfe"/><rect x="19" y="343" width="1" height="2" fill="#c8c8b0" opacity="0.6"/><rect x="21" y="343" width="8" height="2" fill="#9cdcfe"/><rect x="30" y="343" width="2" height="2" fill="#d4d4d4"/><rect x="35" y="343" width="10" height="2" fill="#9cdcfe"/><rect x="46" y="343" width="2" height="2" fill="#d4d4d4"/><rect x="51" y="343" width="9" height="2" fill="#9cdcfe"/><rect x="61" y="343" width="1" height="2" fill="#9cdcfe"/><rect x="63" y="343" width="2" height="2" fill="#d4d4d4"/><rect x="69" y="343" width="7" height="2" fill="#9cdcfe"/><rect x="77" y="343" width="6" height="2" fill="#d4d4d4" opacity="0.45"/><rect x="12" y="345" width="5" height="2" fill="#9cdcfe"/><rect x="19" y="345" width="1" height="2" fill="#c8c8b0" opacity="0.6"/><rect x="21" y="345" width="8" height="2" fill="#9cdcfe"/><rect x="30" y="345" width="2" height="2" fill="#d4d4d4"/><rect x="35" y="345" width="10" height="2" fill="#9cdcfe"/><rect x="46" y="345" width="2" height="2" fill="#d4d4d4"/><rect x="51" y="345" width="5" height="2" fill="#9cdcfe"/><rect x="57" y="345" width="4" height="2" fill="#9cdcfe"/><rect x="63" y="345" width="2" height="2" fill="#d4d4d4"/><rect x="69" y="345" width="7" height="2" fill="#9cdcfe"/><rect x="77" y="345" width="6" height="2" fill="#d4d4d4" opacity="0.45"/><rect x="12" y="347" width="5" height="2" fill="#9cdcfe"/><rect x="19" y="347" width="1" height="2" fill="#c8c8b0" opacity="0.6"/><rect x="21" y="347" width="8" height="2" fill="#9cdcfe"/><rect x="30" y="347" width="2" height="2" fill="#d4d4d4"/><rect x="35" y="347" width="10" height="2" fill="#9cdcfe"/><rect x="46" y="347" width="2" height="2" fill="#d4d4d4"/><rect x="51" y="347" width="7" height="2" fill="#9cdcfe"/><rect x="59" y="347" width="3" height="2" fill="#9cdcfe"/><rect x="63" y="347" width="2" height="2" fill="#d4d4d4"/><rect x="69" y="347" width="8" height="2" fill="#9cdcfe"/><rect x="78" y="347" width="4" height="2" fill="#9cdcfe"/><rect x="84" y="347" width="6" height="2" fill="#d4d4d4" opacity="0.45"/><rect x="12" y="349" width="5" height="2" fill="#9cdcfe"/><rect x="19" y="349" width="1" height="2" fill="#c8c8b0" opacity="0.6"/><rect x="21" y="349" width="8" height="2" fill="#9cdcfe"/><rect x="30" y="349" width="2" height="2" fill="#d4d4d4"/><rect x="35" y="349" width="10" height="2" fill="#9cdcfe"/><rect x="46" y="349" width="2" height="2" fill="#d4d4d4"/><rect x="51" y="349" width="8" height="2" fill="#9cdcfe"/><rect x="60" y="349" width="2" height="2" fill="#9cdcfe"/><rect x="63" y="349" width="2" height="2" fill="#d4d4d4"/><rect x="66" y="349" width="8" height="2" fill="#9cdcfe"/><rect x="75" y="349" width="5" height="2" fill="#d4d4d4" opacity="0.45"/><rect x="12" y="351" width="8" height="2" fill="#6a9955"/><rect x="21" y="351" width="4" height="2" fill="#6a9955"/><rect x="26" y="351" width="3" height="2" fill="#6a9955"/><rect x="30" y="351" width="5" height="2" fill="#6a9955"/><rect x="36" y="351" width="4" height="2" fill="#6a9955"/><rect x="41" y="351" width="8" height="2" fill="#6a9955"/><rect x="50" y="351" width="4" height="2" fill="#6a9955"/><rect x="12" y="353" width="3" height="2" fill="#6a9955"/><rect x="16" y="353" width="8" height="2" fill="#6a9955"/><rect x="25" y="353" width="6" height="2" fill="#6a9955"/><rect x="32" y="353" width="4" height="2" fill="#6a9955"/><rect x="37" y="353" width="6" height="2" fill="#6a9955"/><rect x="44" y="353" width="7" height="2" fill="#6a9955"/><rect x="52" y="353" width="5" height="2" fill="#6a9955"/><rect x="58" y="353" width="5" height="2" fill="#6a9955"/><rect x="64" y="353" width="9" height="2" fill="#6a9955"/><rect x="74" y="353" width="9" height="2" fill="#6a9955"/><rect x="84" y="353" width="8" height="2" fill="#6a9955"/><rect x="12" y="355" width="4" height="2" fill="#6a9955"/><rect x="17" y="355" width="9" height="2" fill="#6a9955"/><rect x="27" y="355" width="9" height="2" fill="#6a9955"/><rect x="37" y="355" width="6" height="2" fill="#6a9955"/><rect x="44" y="355" width="4" height="2" fill="#6a9955"/><rect x="49" y="355" width="8" height="2" fill="#6a9955"/><rect x="58" y="355" width="6" height="2" fill="#6a9955"/><rect x="65" y="355" width="7" height="2" fill="#6a9955"/><rect x="8" y="357" width="1" height="2" fill="#c8c8b0" opacity="0.6"/><rect x="8" y="365" width="6" height="2" fill="#9cdcfe"/><rect x="14" y="365" width="1" height="2" fill="#d4d4d4"/><rect x="15" y="365" width="7" height="2" fill="#4ec9b0"/><rect x="24" y="365" width="1" height="2" fill="#d4d4d4"/><rect x="26" y="365" width="1" height="2" fill="#c8c8b0" opacity="0.6"/><rect x="28" y="365" width="7" height="2" fill="#6a9955"/><rect x="36" y="365" width="5" height="2" fill="#6a9955"/><rect x="42" y="365" width="4" height="2" fill="#6a9955"/><rect x="47" y="365" width="6" height="2" fill="#6a9955"/><rect x="54" y="365" width="4" height="2" fill="#6a9955"/><rect x="59" y="365" width="9" height="2" fill="#6a9955"/><rect x="69" y="365" width="9" height="2" fill="#6a9955"/><rect x="79" y="365" width="8" height="2" fill="#6a9955"/><rect x="88" y="365" width="4" height="2" fill="#6a9955"/><rect x="93" y="365" width="3" height="2" fill="#6a9955"/><rect x="97" y="365" width="4" height="2" fill="#6a9955"/><rect x="102" y="365" width="3" height="2" fill="#6a9955"/><rect x="8" y="367" width="8" height="2" fill="#6a9955"/><rect x="17" y="367" width="6" height="2" fill="#6a9955"/><rect x="24" y="367" width="3" height="2" fill="#6a9955"/><rect x="28" y="367" width="6" height="2" fill="#6a9955"/><rect x="35" y="367" width="3" height="2" fill="#6a9955"/><rect x="39" y="367" width="7" height="2" fill="#6a9955"/><rect x="47" y="367" width="8" height="2" fill="#6a9955"/><rect x="56" y="367" width="9" height="2" fill="#6a9955"/><rect x="66" y="367" width="9" height="2" fill="#6a9955"/><rect x="76" y="367" width="4" height="2" fill="#6a9955"/><rect x="81" y="367" width="5" height="2" fill="#6a9955"/><rect x="87" y="367" width="8" height="2" fill="#6a9955"/><rect x="96" y="367" width="3" height="2" fill="#6a9955"/><rect x="100" y="367" width="3" height="2" fill="#6a9955"/><rect x="12" y="369" width="3" height="2" fill="#6a9955"/><rect x="16" y="369" width="5" height="2" fill="#6a9955"/><rect x="22" y="369" width="9" height="2" fill="#6a9955"/><rect x="32" y="369" width="5" height="2" fill="#6a9955"/><rect x="38" y="369" width="4" height="2" fill="#6a9955"/><rect x="43" y="369" width="9" height="2" fill="#6a9955"/><rect x="53" y="369" width="1" height="2" fill="#6a9955"/><rect x="12" y="371" width="6" height="2" fill="#6a9955"/><rect x="19" y="371" width="8" height="2" fill="#6a9955"/><rect x="28" y="371" width="4" height="2" fill="#6a9955"/><rect x="33" y="371" width="4" height="2" fill="#6a9955"/><rect x="38" y="371" width="3" height="2" fill="#6a9955"/><rect x="42" y="371" width="6" height="2" fill="#6a9955"/><rect x="49" y="371" width="3" height="2" fill="#6a9955"/><rect x="53" y="371" width="8" height="2" fill="#6a9955"/><rect x="62" y="371" width="8" height="2" fill="#6a9955"/><rect x="71" y="371" width="6" height="2" fill="#6a9955"/><rect x="78" y="371" width="6" height="2" fill="#6a9955"/><rect x="85" y="371" width="5" height="2" fill="#6a9955"/><rect x="91" y="371" width="4" height="2" fill="#6a9955"/><rect x="96" y="371" width="4" height="2" fill="#6a9955"/><rect x="101" y="371" width="5" height="2" fill="#6a9955"/><rect x="12" y="373" width="5" height="2" fill="#6a9955"/><rect x="18" y="373" width="4" height="2" fill="#6a9955"/><rect x="23" y="373" width="2" height="2" fill="#6a9955"/><rect x="16" y="375" width="6" height="2" fill="#6a9955"/><rect x="23" y="375" width="5" height="2" fill="#6a9955"/><rect x="29" y="375" width="6" height="2" fill="#6a9955"/><rect x="36" y="375" width="6" height="2" fill="#6a9955"/><rect x="43" y="375" width="4" height="2" fill="#6a9955"/><rect x="48" y="375" width="6" height="2" fill="#6a9955"/><rect x="55" y="375" width="6" height="2" fill="#6a9955"/><rect x="62" y="375" width="7" height="2" fill="#6a9955"/><rect x="70" y="375" width="7" height="2" fill="#6a9955"/><rect x="78" y="375" width="8" height="2" fill="#6a9955"/><rect x="87" y="375" width="2" height="2" fill="#6a9955"/><rect x="12" y="377" width="1" height="2" fill="#6a9955"/><rect x="8" y="379" width="4" height="2" fill="#6a9955"/><rect x="12" y="383" width="1" height="2" fill="#d4d4d4"/><rect x="13" y="383" width="5" height="2" fill="#ce9178"/><rect x="19" y="383" width="5" height="2" fill="#ce9178"/><rect x="25" y="383" width="3" height="2" fill="#d4d4d4" opacity="0.45"/><rect x="29" y="383" width="9" height="2" fill="#9cdcfe"/><rect x="39" y="383" width="1" height="2" fill="#d4d4d4"/><rect x="40" y="383" width="10" height="2" fill="#9cdcfe"/><rect x="51" y="383" width="1" height="2" fill="#d4d4d4"/><rect x="52" y="383" width="7" height="2" fill="#ce9178"/><rect x="60" y="383" width="3" height="2" fill="#ce9178"/><rect x="64" y="383" width="3" height="2" fill="#9cdcfe"/><rect x="68" y="383" width="4" height="2" fill="#9cdcfe"/><rect x="73" y="383" width="3" height="2" fill="#9cdcfe"/><rect x="77" y="383" width="4" height="2" fill="#9cdcfe"/><rect x="82" y="383" width="1" height="2" fill="#9cdcfe"/><rect x="84" y="383" width="4" height="2" fill="#d4d4d4" opacity="0.45"/><rect x="89" y="383" width="7" height="2" fill="#ce9178"/><rect x="97" y="383" width="6" height="2" fill="#d4d4d4" opacity="0.45"/><rect x="104" y="383" width="5" height="2" fill="#ce9178"/><rect x="110" y="383" width="5" height="2" fill="#ce9178"/><rect x="116" y="383" width="3" height="2" fill="#ce9178"/><rect x="12" y="385" width="1" height="2" fill="#d4d4d4"/><rect x="13" y="385" width="4" height="2" fill="#ce9178"/><rect x="18" y="385" width="6" height="2" fill="#ce9178"/><rect x="25" y="385" width="3" height="2" fill="#d4d4d4" opacity="0.45"/><rect x="29" y="385" width="9" height="2" fill="#9cdcfe"/><rect x="39" y="385" width="1" height="2" fill="#d4d4d4"/><rect x="40" y="385" width="10" height="2" fill="#9cdcfe"/><rect x="51" y="385" width="1" height="2" fill="#d4d4d4"/><rect x="52" y="385" width="4" height="2" fill="#ce9178"/><rect x="57" y="385" width="6" height="2" fill="#ce9178"/><rect x="64" y="385" width="9" height="2" fill="#9cdcfe"/><rect x="74" y="385" width="7" height="2" fill="#9cdcfe"/><rect x="82" y="385" width="1" height="2" fill="#9cdcfe"/><rect x="84" y="385" width="4" height="2" fill="#d4d4d4" opacity="0.45"/><rect x="89" y="385" width="7" height="2" fill="#ce9178"/><rect x="97" y="385" width="6" height="2" fill="#d4d4d4" opacity="0.45"/><rect x="104" y="385" width="3" height="2" fill="#ce9178"/><rect x="108" y="385" width="8" height="2" fill="#ce9178"/><rect x="117" y="385" width="2" height="2" fill="#ce9178"/><rect x="12" y="387" width="1" height="2" fill="#d4d4d4"/><rect x="13" y="387" width="5" height="2" fill="#ce9178"/><rect x="19" y="387" width="5" height="2" fill="#ce9178"/><rect x="25" y="387" width="3" height="2" fill="#d4d4d4" opacity="0.45"/><rect x="32" y="387" width="6" height="2" fill="#9cdcfe"/><rect x="39" y="387" width="1" height="2" fill="#d4d4d4"/><rect x="42" y="387" width="8" height="2" fill="#9cdcfe"/><rect x="51" y="387" width="1" height="2" fill="#d4d4d4"/><rect x="56" y="387" width="7" height="2" fill="#ce9178"/><rect x="68" y="387" width="4" height="2" fill="#9cdcfe"/><rect x="73" y="387" width="4" height="2" fill="#9cdcfe"/><rect x="78" y="387" width="2" height="2" fill="#9cdcfe"/><rect x="84" y="387" width="4" height="2" fill="#d4d4d4" opacity="0.45"/><rect x="89" y="387" width="7" height="2" fill="#ce9178"/><rect x="97" y="387" width="6" height="2" fill="#d4d4d4" opacity="0.45"/><rect x="104" y="387" width="7" height="2" fill="#ce9178"/><rect x="112" y="387" width="3" height="2" fill="#ce9178"/><rect x="116" y="387" width="3" height="2" fill="#ce9178"/><rect x="12" y="389" width="1" height="2" fill="#d4d4d4"/><rect x="13" y="389" width="4" height="2" fill="#ce9178"/><rect x="18" y="389" width="3" height="2" fill="#ce9178"/><rect x="22" y="389" width="2" height="2" fill="#ce9178"/><rect x="25" y="389" width="3" height="2" fill="#d4d4d4" opacity="0.45"/><rect x="32" y="389" width="6" height="2" fill="#9cdcfe"/><rect x="39" y="389" width="1" height="2" fill="#d4d4d4"/><rect x="42" y="389" width="8" height="2" fill="#9cdcfe"/><rect x="51" y="389" width="1" height="2" fill="#d4d4d4"/><rect x="56" y="389" width="7" height="2" fill="#ce9178"/><rect x="68" y="389" width="6" height="2" fill="#9cdcfe"/><rect x="75" y="389" width="3" height="2" fill="#9cdcfe"/><rect x="79" y="389" width="1" height="2" fill="#9cdcfe"/><rect x="84" y="389" width="4" height="2" fill="#d4d4d4" opacity="0.45"/><rect x="89" y="389" width="7" height="2" fill="#ce9178"/><rect x="97" y="389" width="6" height="2" fill="#d4d4d4" opacity="0.45"/><rect x="104" y="389" width="3" height="2" fill="#ce9178"/><rect x="108" y="389" width="7" height="2" fill="#ce9178"/><rect x="116" y="389" width="3" height="2" fill="#ce9178"/><rect x="12" y="391" width="1" height="2" fill="#d4d4d4"/><rect x="13" y="391" width="6" height="2" fill="#ce9178"/><rect x="20" y="391" width="4" height="2" fill="#ce9178"/><rect x="25" y="391" width="3" height="2" fill="#d4d4d4" opacity="0.45"/><rect x="29" y="391" width="9" height="2" fill="#9cdcfe"/><rect x="39" y="391" width="1" height="2" fill="#d4d4d4"/><rect x="40" y="391" width="10" height="2" fill="#9cdcfe"/><rect x="51" y="391" width="1" height="2" fill="#d4d4d4"/><rect x="52" y="391" width="3" height="2" fill="#ce9178"/><rect x="56" y="391" width="7" height="2" fill="#ce9178"/><rect x="64" y="391" width="6" height="2" fill="#9cdcfe"/><rect x="71" y="391" width="7" height="2" fill="#9cdcfe"/><rect x="79" y="391" width="4" height="2" fill="#9cdcfe"/><rect x="84" y="391" width="4" height="2" fill="#d4d4d4" opacity="0.45"/><rect x="89" y="391" width="7" height="2" fill="#ce9178"/><rect x="97" y="391" width="6" height="2" fill="#d4d4d4" opacity="0.45"/><rect x="104" y="391" width="8" height="2" fill="#ce9178"/><rect x="113" y="391" width="6" height="2" fill="#ce9178"/><rect x="12" y="393" width="1" height="2" fill="#d4d4d4"/><rect x="13" y="393" width="7" height="2" fill="#ce9178"/><rect x="21" y="393" width="6" height="2" fill="#ce9178"/><rect x="29" y="393" width="1" height="2" fill="#d4d4d4"/><rect x="30" y="393" width="8" height="2" fill="#9cdcfe"/><rect x="39" y="393" width="1" height="2" fill="#d4d4d4"/><rect x="43" y="393" width="10" height="2" fill="#9cdcfe"/><rect x="54" y="393" width="1" height="2" fill="#d4d4d4"/><rect x="56" y="393" width="7" height="2" fill="#ce9178"/><rect x="65" y="393" width="4" height="2" fill="#9cdcfe"/><rect x="70" y="393" width="3" height="2" fill="#9cdcfe"/><rect x="74" y="393" width="2" height="2" fill="#9cdcfe"/><rect x="78" y="393" width="10" height="2" fill="#d4d4d4" opacity="0.45"/><rect x="89" y="393" width="7" height="2" fill="#ce9178"/><rect x="97" y="393" width="6" height="2" fill="#d4d4d4" opacity="0.45"/><rect x="104" y="393" width="8" height="2" fill="#ce9178"/><rect x="113" y="393" width="6" height="2" fill="#ce9178"/><rect x="12" y="395" width="13" height="2" fill="#d4d4d4" opacity="0.45"/><rect x="25" y="395" width="6" height="2" fill="#9cdcfe"/><rect x="32" y="395" width="1" height="2" fill="#d4d4d4"/><rect x="33" y="395" width="4" height="2" fill="#ce9178"/><rect x="38" y="395" width="1" height="2" fill="#d4d4d4"/><rect x="39" y="395" width="4" height="2" fill="#ce9178"/><rect x="44" y="395" width="2" height="2" fill="#d4d4d4"/><rect x="47" y="395" width="6" height="2" fill="#9cdcfe"/><rect x="54" y="395" width="4" height="2" fill="#d4d4d4" opacity="0.45"/><rect x="59" y="395" width="9" height="2" fill="#9cdcfe"/><rect x="69" y="395" width="1" height="2" fill="#d4d4d4"/><rect x="71" y="395" width="7" height="2" fill="#ce9178"/><rect x="79" y="395" width="1" height="2" fill="#d4d4d4"/><rect x="80" y="395" width="10" height="2" fill="#9cdcfe"/><rect x="91" y="395" width="5" height="2" fill="#d4d4d4" opacity="0.45"/><rect x="97" y="395" width="6" height="2" fill="#ce9178"/><rect x="104" y="395" width="10" height="2" fill="#d4d4d4" opacity="0.45"/><rect x="115" y="395" width="4" height="2" fill="#ce9178"/><rect x="12" y="397" width="13" height="2" fill="#d4d4d4" opacity="0.45"/><rect x="25" y="397" width="6" height="2" fill="#9cdcfe"/><rect x="32" y="397" width="1" height="2" fill="#d4d4d4"/><rect x="33" y="397" width="4" height="2" fill="#ce9178"/><rect x="38" y="397" width="1" height="2" fill="#d4d4d4"/><rect x="39" y="397" width="4" height="2" fill="#ce9178"/><rect x="44" y="397" width="2" height="2" fill="#d4d4d4"/><rect x="47" y="397" width="6" height="2" fill="#9cdcfe"/><rect x="54" y="397" width="4" height="2" fill="#d4d4d4" opacity="0.45"/><rect x="59" y="397" width="9" height="2" fill="#9cdcfe"/><rect x="69" y="397" width="1" height="2" fill="#d4d4d4"/><rect x="71" y="397" width="7" height="2" fill="#ce9178"/><rect x="79" y="397" width="1" height="2" fill="#d4d4d4"/><rect x="80" y="397" width="10" height="2" fill="#9cdcfe"/><rect x="91" y="397" width="5" height="2" fill="#d4d4d4" opacity="0.45"/><rect x="97" y="397" width="6" height="2" fill="#ce9178"/><rect x="104" y="397" width="10" height="2" fill="#d4d4d4" opacity="0.45"/><rect x="115" y="397" width="4" height="2" fill="#ce9178"/><rect x="12" y="399" width="13" height="2" fill="#d4d4d4" opacity="0.45"/><rect x="25" y="399" width="6" height="2" fill="#9cdcfe"/><rect x="32" y="399" width="1" height="2" fill="#d4d4d4"/><rect x="33" y="399" width="4" height="2" fill="#ce9178"/><rect x="38" y="399" width="1" height="2" fill="#d4d4d4"/><rect x="39" y="399" width="4" height="2" fill="#ce9178"/><rect x="44" y="399" width="2" height="2" fill="#d4d4d4"/><rect x="47" y="399" width="6" height="2" fill="#9cdcfe"/><rect x="54" y="399" width="4" height="2" fill="#d4d4d4" opacity="0.45"/><rect x="59" y="399" width="9" height="2" fill="#9cdcfe"/><rect x="69" y="399" width="1" height="2" fill="#d4d4d4"/><rect x="71" y="399" width="7" height="2" fill="#ce9178"/><rect x="79" y="399" width="1" height="2" fill="#d4d4d4"/><rect x="80" y="399" width="10" height="2" fill="#9cdcfe"/><rect x="91" y="399" width="5" height="2" fill="#d4d4d4" opacity="0.45"/><rect x="97" y="399" width="6" height="2" fill="#ce9178"/><rect x="104" y="399" width="10" height="2" fill="#d4d4d4" opacity="0.45"/><rect x="115" y="399" width="4" height="2" fill="#ce9178"/><rect x="12" y="401" width="13" height="2" fill="#d4d4d4" opacity="0.45"/><rect x="25" y="401" width="6" height="2" fill="#9cdcfe"/><rect x="32" y="401" width="1" height="2" fill="#d4d4d4"/><rect x="33" y="401" width="4" height="2" fill="#ce9178"/><rect x="38" y="401" width="1" height="2" fill="#d4d4d4"/><rect x="39" y="401" width="4" height="2" fill="#ce9178"/><rect x="44" y="401" width="2" height="2" fill="#d4d4d4"/><rect x="47" y="401" width="6" height="2" fill="#9cdcfe"/><rect x="54" y="401" width="4" height="2" fill="#d4d4d4" opacity="0.45"/><rect x="59" y="401" width="9" height="2" fill="#9cdcfe"/><rect x="69" y="401" width="1" height="2" fill="#d4d4d4"/><rect x="71" y="401" width="7" height="2" fill="#ce9178"/><rect x="79" y="401" width="1" height="2" fill="#d4d4d4"/><rect x="80" y="401" width="10" height="2" fill="#9cdcfe"/><rect x="91" y="401" width="5" height="2" fill="#d4d4d4" opacity="0.45"/><rect x="97" y="401" width="6" height="2" fill="#ce9178"/><rect x="104" y="401" width="10" height="2" fill="#d4d4d4" opacity="0.45"/><rect x="115" y="401" width="4" height="2" fill="#ce9178"/><rect x="12" y="403" width="13" height="2" fill="#d4d4d4" opacity="0.45"/><rect x="25" y="403" width="6" height="2" fill="#9cdcfe"/><rect x="32" y="403" width="1" height="2" fill="#d4d4d4"/><rect x="33" y="403" width="4" height="2" fill="#ce9178"/><rect x="38" y="403" width="1" height="2" fill="#d4d4d4"/><rect x="39" y="403" width="4" height="2" fill="#ce9178"/><rect x="44" y="403" width="2" height="2" fill="#d4d4d4"/><rect x="47" y="403" width="6" height="2" fill="#9cdcfe"/><rect x="54" y="403" width="4" height="2" fill="#d4d4d4" opacity="0.45"/><rect x="59" y="403" width="9" height="2" fill="#9cdcfe"/><rect x="69" y="403" width="1" height="2" fill="#d4d4d4"/><rect x="71" y="403" width="7" height="2" fill="#ce9178"/><rect x="79" y="403" width="1" height="2" fill="#d4d4d4"/><rect x="80" y="403" width="10" height="2" fill="#9cdcfe"/><rect x="91" y="403" width="5" height="2" fill="#d4d4d4" opacity="0.45"/><rect x="97" y="403" width="6" height="2" fill="#ce9178"/><rect x="104" y="403" width="10" height="2" fill="#d4d4d4" opacity="0.45"/><rect x="115" y="403" width="4" height="2" fill="#ce9178"/><rect x="8" y="405" width="1" height="2" fill="#c8c8b0" opacity="0.6"/><rect x="8" y="407" width="6" height="2" fill="#6a9955"/><rect x="15" y="407" width="6" height="2" fill="#6a9955"/><rect x="22" y="407" width="4" height="2" fill="#6a9955"/><rect x="8" y="409" width="6" height="2" fill="#9cdcfe"/><rect x="14" y="409" width="1" height="2" fill="#d4d4d4"/><rect x="15" y="409" width="10" height="2" fill="#4ec9b0"/><rect x="26" y="409" width="1" height="2" fill="#d4d4d4"/><rect x="28" y="409" width="1" height="2" fill="#c8c8b0" opacity="0.6"/><rect x="12" y="411" width="5" height="2" fill="#6a9955"/><rect x="18" y="411" width="7" height="2" fill="#6a9955"/><rect x="26" y="411" width="5" height="2" fill="#6a9955"/><rect x="32" y="411" width="9" height="2" fill="#6a9955"/><rect x="42" y="411" width="7" height="2" fill="#6a9955"/><rect x="50" y="411" width="6" height="2" fill="#6a9955"/><rect x="12" y="413" width="5" height="2" fill="#6a9955"/><rect x="18" y="413" width="7" height="2" fill="#6a9955"/><rect x="26" y="413" width="7" height="2" fill="#6a9955"/><rect x="34" y="413" width="9" height="2" fill="#6a9955"/><rect x="44" y="413" width="6" height="2" fill="#6a9955"/><rect x="51" y="413" width="5" height="2" fill="#6a9955"/><rect x="57" y="413" width="6" height="2" fill="#6a9955"/><rect x="64" y="413" width="4" height="2" fill="#6a9955"/><rect x="69" y="413" width="4" height="2" fill="#6a9955"/><rect x="74" y="413" width="5" height="2" fill="#6a9955"/><rect x="80" y="413" width="5" height="2" fill="#6a9955"/><rect x="86" y="413" width="5" height="2" fill="#6a9955"/><rect x="12" y="415" width="7" height="2" fill="#6a9955"/><rect x="20" y="415" width="2" height="2" fill="#6a9955"/><rect x="12" y="417" width="9" height="2" fill="#6a9955"/><rect x="22" y="417" width="5" height="2" fill="#6a9955"/><rect x="28" y="417" width="1" height="2" fill="#6a9955"/><rect x="16" y="419" width="6" height="2" fill="#6a9955"/><rect x="23" y="419" width="4" height="2" fill="#6a9955"/><rect x="28" y="419" width="3" height="2" fill="#6a9955"/><rect x="32" y="419" width="3" height="2" fill="#6a9955"/><rect x="16" y="421" width="5" height="2" fill="#6a9955"/><rect x="22" y="421" width="7" height="2" fill="#6a9955"/><rect x="30" y="421" width="1" height="2" fill="#6a9955"/><rect x="16" y="423" width="3" height="2" fill="#6a9955"/><rect x="20" y="423" width="3" height="2" fill="#6a9955"/><rect x="24" y="423" width="8" height="2" fill="#6a9955"/><rect x="33" y="423" width="5" height="2" fill="#6a9955"/><rect x="39" y="423" width="6" height="2" fill="#6a9955"/><rect x="46" y="423" width="3" height="2" fill="#6a9955"/><rect x="50" y="423" width="4" height="2" fill="#6a9955"/><rect x="55" y="423" width="9" height="2" fill="#6a9955"/><rect x="65" y="423" width="8" height="2" fill="#6a9955"/><rect x="74" y="423" width="8" height="2" fill="#6a9955"/><rect x="16" y="425" width="3" height="2" fill="#6a9955"/><rect x="20" y="425" width="6" height="2" fill="#6a9955"/><rect x="27" y="425" width="5" height="2" fill="#6a9955"/><rect x="16" y="427" width="9" height="2" fill="#6a9955"/><rect x="26" y="427" width="1" height="2" fill="#6a9955"/><rect x="16" y="429" width="9" height="2" fill="#6a9955"/><rect x="20" y="431" width="8" height="2" fill="#6a9955"/><rect x="29" y="431" width="5" height="2" fill="#6a9955"/><rect x="35" y="431" width="8" height="2" fill="#6a9955"/><rect x="44" y="431" width="2" height="2" fill="#6a9955"/><rect x="20" y="433" width="7" height="2" fill="#6a9955"/><rect x="28" y="433" width="4" height="2" fill="#6a9955"/><rect x="20" y="435" width="6" height="2" fill="#6a9955"/><rect x="27" y="435" width="6" height="2" fill="#6a9955"/><rect x="34" y="435" width="5" height="2" fill="#6a9955"/><rect x="40" y="435" width="4" height="2" fill="#6a9955"/><rect x="20" y="437" width="6" height="2" fill="#6a9955"/><rect x="27" y="437" width="8" height="2" fill="#6a9955"/><rect x="36" y="437" width="5" height="2" fill="#6a9955"/><rect x="42" y="437" width="3" height="2" fill="#6a9955"/><rect x="16" y="439" width="1" height="2" fill="#6a9955"/><rect x="12" y="441" width="3" height="2" fill="#6a9955"/><rect x="12" y="443" width="4" height="2" fill="#9cdcfe"/><rect x="18" y="443" width="1" height="2" fill="#d4d4d4"/><rect x="20" y="443" width="1" height="2" fill="#c8c8b0" opacity="0.6"/><rect x="22" y="443" width="6" height="2" fill="#6a9955"/><rect x="29" y="443" width="9" height="2" fill="#6a9955"/><rect x="39" y="443" width="5" height="2" fill="#6a9955"/><rect x="45" y="443" width="5" height="2" fill="#6a9955"/><rect x="51" y="443" width="8" height="2" fill="#6a9955"/><rect x="60" y="443" width="5" height="2" fill="#6a9955"/><rect x="66" y="443" width="9" height="2" fill="#6a9955"/><rect x="76" y="443" width="4" height="2" fill="#6a9955"/><rect x="81" y="443" width="2" height="2" fill="#6a9955"/><rect x="16" y="445" width="5" height="2" fill="#9cdcfe"/><rect x="22" y="445" width="1" height="2" fill="#d4d4d4"/><rect x="24" y="445" width="6" height="2" fill="#ce9178"/><rect x="31" y="445" width="1" height="2" fill="#ce9178"/><rect x="33" y="445" width="1" height="2" fill="#d4d4d4"/><rect x="51" y="445" width="3" height="2" fill="#6a9955"/><rect x="55" y="445" width="5" height="2" fill="#6a9955"/><rect x="61" y="445" width="3" height="2" fill="#6a9955"/><rect x="65" y="445" width="3" height="2" fill="#6a9955"/><rect x="69" y="445" width="3" height="2" fill="#6a9955"/><rect x="73" y="445" width="7" height="2" fill="#6a9955"/><rect x="81" y="445" width="7" height="2" fill="#6a9955"/><rect x="89" y="445" width="1" height="2" fill="#6a9955"/><rect x="16" y="447" width="8" height="2" fill="#9cdcfe"/><rect x="25" y="447" width="1" height="2" fill="#d4d4d4"/><rect x="27" y="447" width="5" height="2" fill="#b5cea8"/><rect x="33" y="447" width="1" height="2" fill="#d4d4d4"/><rect x="51" y="447" width="7" height="2" fill="#6a9955"/><rect x="59" y="447" width="7" height="2" fill="#6a9955"/><rect x="67" y="447" width="3" height="2" fill="#6a9955"/><rect x="71" y="447" width="4" height="2" fill="#6a9955"/><rect x="76" y="447" width="4" height="2" fill="#6a9955"/><rect x="81" y="447" width="3" height="2" fill="#6a9955"/><rect x="85" y="447" width="4" height="2" fill="#6a9955"/><rect x="90" y="447" width="7" height="2" fill="#6a9955"/><rect x="98" y="447" width="5" height="2" fill="#6a9955"/><rect x="104" y="447" width="8" height="2" fill="#6a9955"/><rect x="16" y="449" width="4" height="2" fill="#9cdcfe"/><rect x="21" y="449" width="1" height="2" fill="#d4d4d4"/><rect x="23" y="449" width="3" height="2" fill="#ce9178"/><rect x="27" y="449" width="9" height="2" fill="#ce9178"/><rect x="37" y="449" width="6" height="2" fill="#ce9178"/><rect x="44" y="449" width="7" height="2" fill="#ce9178"/><rect x="52" y="449" width="6" height="2" fill="#ce9178"/><rect x="59" y="449" width="1" height="2" fill="#d4d4d4"/><rect x="62" y="449" width="5" height="2" fill="#6a9955"/><rect x="68" y="449" width="9" height="2" fill="#6a9955"/><rect x="78" y="449" width="4" height="2" fill="#6a9955"/><rect x="83" y="449" width="8" height="2" fill="#6a9955"/><rect x="92" y="449" width="4" height="2" fill="#6a9955"/><rect x="97" y="449" width="6" height="2" fill="#6a9955"/><rect x="104" y="449" width="6" height="2" fill="#6a9955"/><rect x="111" y="449" width="4" height="2" fill="#6a9955"/><rect x="16" y="451" width="4" height="2" fill="#9cdcfe"/><rect x="21" y="451" width="1" height="2" fill="#d4d4d4"/><rect x="23" y="451" width="6" height="2" fill="#ce9178"/><rect x="30" y="451" width="1" height="2" fill="#d4d4d4"/><rect x="51" y="451" width="5" height="2" fill="#6a9955"/><rect x="57" y="451" width="3" height="2" fill="#6a9955"/><rect x="61" y="451" width="5" height="2" fill="#6a9955"/><rect x="67" y="451" width="7" height="2" fill="#6a9955"/><rect x="75" y="451" width="8" height="2" fill="#6a9955"/><rect x="84" y="451" width="6" height="2" fill="#6a9955"/><rect x="16" y="453" width="4" height="2" fill="#9cdcfe"/><rect x="21" y="453" width="1" height="2" fill="#d4d4d4"/><rect x="23" y="453" width="2" height="2" fill="#d4d4d4"/><rect x="54" y="453" width="9" height="2" fill="#6a9955"/><rect x="64" y="453" width="4" height="2" fill="#6a9955"/><rect x="69" y="453" width="5" height="2" fill="#6a9955"/><rect x="75" y="453" width="6" height="2" fill="#6a9955"/><rect x="82" y="453" width="7" height="2" fill="#6a9955"/><rect x="90" y="453" width="4" height="2" fill="#6a9955"/><rect x="95" y="453" width="6" height="2" fill="#6a9955"/><rect x="102" y="453" width="3" height="2" fill="#6a9955"/><rect x="106" y="453" width="6" height="2" fill="#6a9955"/><rect x="16" y="455" width="4" height="2" fill="#9cdcfe"/><rect x="21" y="455" width="1" height="2" fill="#d4d4d4"/><rect x="24" y="455" width="1" height="2" fill="#b5cea8"/><rect x="26" y="455" width="1" height="2" fill="#d4d4d4"/><rect x="16" y="457" width="4" height="2" fill="#9cdcfe"/><rect x="21" y="457" width="1" height="2" fill="#d4d4d4"/><rect x="23" y="457" width="1" height="2" fill="#c8c8b0" opacity="0.6"/><rect x="20" y="459" width="5" height="2" fill="#9cdcfe"/><rect x="26" y="459" width="1" height="2" fill="#d4d4d4"/><rect x="28" y="459" width="8" height="2" fill="#ce9178"/><rect x="37" y="459" width="5" height="2" fill="#ce9178"/><rect x="43" y="459" width="3" height="2" fill="#ce9178"/><rect x="47" y="459" width="1" height="2" fill="#ce9178"/><rect x="49" y="459" width="1" height="2" fill="#d4d4d4"/><rect x="51" y="459" width="9" height="2" fill="#6a9955"/><rect x="61" y="459" width="5" height="2" fill="#6a9955"/><rect x="67" y="459" width="9" height="2" fill="#6a9955"/><rect x="77" y="459" width="3" height="2" fill="#6a9955"/><rect x="81" y="459" width="4" height="2" fill="#6a9955"/><rect x="86" y="459" width="7" height="2" fill="#6a9955"/><rect x="94" y="459" width="3" height="2" fill="#6a9955"/><rect x="98" y="459" width="7" height="2" fill="#6a9955"/><rect x="106" y="459" width="6" height="2" fill="#6a9955"/><rect x="20" y="461" width="5" height="2" fill="#9cdcfe"/><rect x="26" y="461" width="1" height="2" fill="#d4d4d4"/><rect x="27" y="461" width="5" height="2" fill="#b5cea8"/><rect x="33" y="461" width="1" height="2" fill="#d4d4d4"/><rect x="54" y="461" width="9" height="2" fill="#6a9955"/><rect x="64" y="461" width="6" height="2" fill="#6a9955"/><rect x="71" y="461" width="8" height="2" fill="#6a9955"/><rect x="80" y="461" width="3" height="2" fill="#6a9955"/><rect x="84" y="461" width="9" height="2" fill="#6a9955"/><rect x="94" y="461" width="6" height="2" fill="#6a9955"/><rect x="101" y="461" width="3" height="2" fill="#6a9955"/><rect x="20" y="463" width="2" height="2" fill="#9cdcfe"/><rect x="23" y="463" width="1" height="2" fill="#d4d4d4"/><rect x="26" y="463" width="5" height="2" fill="#dcdcaa"/><rect x="32" y="463" width="6" height="2" fill="#b5cea8"/><rect x="39" y="463" width="6" height="2" fill="#b5cea8"/><rect x="46" y="463" width="3" height="2" fill="#b5cea8"/><rect x="51" y="463" width="4" height="2" fill="#6a9955"/><rect x="56" y="463" width="6" height="2" fill="#6a9955"/><rect x="63" y="463" width="8" height="2" fill="#6a9955"/><rect x="72" y="463" width="7" height="2" fill="#6a9955"/><rect x="80" y="463" width="6" height="2" fill="#6a9955"/><rect x="87" y="463" width="9" height="2" fill="#6a9955"/><rect x="97" y="463" width="4" height="2" fill="#6a9955"/><rect x="20" y="465" width="2" height="2" fill="#9cdcfe"/><rect x="23" y="465" width="1" height="2" fill="#d4d4d4"/><rect x="26" y="465" width="5" height="2" fill="#dcdcaa"/><rect x="32" y="465" width="6" height="2" fill="#b5cea8"/><rect x="39" y="465" width="5" height="2" fill="#b5cea8"/><rect x="45" y="465" width="3" height="2" fill="#b5cea8"/><rect x="51" y="465" width="7" height="2" fill="#6a9955"/><rect x="59" y="465" width="8" height="2" fill="#6a9955"/><rect x="68" y="465" width="7" height="2" fill="#6a9955"/><rect x="76" y="465" width="3" height="2" fill="#6a9955"/><rect x="80" y="465" width="1" height="2" fill="#6a9955"/><rect x="16" y="467" width="1" height="2" fill="#c8c8b0" opacity="0.6"/><rect x="12" y="469" width="1" height="2" fill="#c8c8b0" opacity="0.6"/><rect x="13" y="469" width="1" height="2" fill="#d4d4d4"/><rect x="12" y="471" width="4" height="2" fill="#9cdcfe"/><rect x="18" y="471" width="1" height="2" fill="#d4d4d4"/><rect x="20" y="471" width="1" height="2" fill="#c8c8b0" opacity="0.6"/><rect x="16" y="473" width="6" height="2" fill="#9cdcfe"/><rect x="23" y="473" width="1" height="2" fill="#d4d4d4"/><rect x="24" y="473" width="9" height="2" fill="#ce9178"/><rect x="34" y="473" width="3" height="2" fill="#ce9178"/><rect x="39" y="473" width="1" height="2" fill="#d4d4d4"/><rect x="16" y="475" width="8" height="2" fill="#9cdcfe"/><rect x="25" y="475" width="1" height="2" fill="#d4d4d4"/><rect x="27" y="475" width="5" height="2" fill="#b5cea8"/><rect x="16" y="477" width="4" height="2" fill="#9cdcfe"/><rect x="21" y="477" width="1" height="2" fill="#d4d4d4"/><rect x="23" y="477" width="8" height="2" fill="#ce9178"/><rect x="32" y="477" width="3" height="2" fill="#ce9178"/><rect x="36" y="477" width="9" height="2" fill="#ce9178"/><rect x="46" y="477" width="7" height="2" fill="#ce9178"/><rect x="54" y="477" width="6" height="2" fill="#ce9178"/><rect x="61" y="477" width="6" height="2" fill="#ce9178"/><rect x="68" y="477" width="1" height="2" fill="#d4d4d4"/><rect x="16" y="479" width="4" height="2" fill="#9cdcfe"/><rect x="21" y="479" width="1" height="2" fill="#d4d4d4"/><rect x="23" y="479" width="6" height="2" fill="#ce9178"/><rect x="30" y="479" width="8" height="2" fill="#ce9178"/><rect x="39" y="479" width="5" height="2" fill="#ce9178"/><rect x="45" y="479" width="1" height="2" fill="#ce9178"/><rect x="47" y="479" width="1" height="2" fill="#d4d4d4"/><rect x="16" y="481" width="4" height="2" fill="#9cdcfe"/><rect x="21" y="481" width="1" height="2" fill="#d4d4d4"/><rect x="24" y="481" width="2" height="2" fill="#b5cea8"/><rect x="16" y="483" width="4" height="2" fill="#9cdcfe"/><rect x="22" y="483" width="1" height="2" fill="#d4d4d4"/><rect x="24" y="483" width="1" height="2" fill="#c8c8b0" opacity="0.6"/><rect x="20" y="485" width="5" height="2" fill="#9cdcfe"/><rect x="26" y="485" width="1" height="2" fill="#d4d4d4"/><rect x="28" y="485" width="5" height="2" fill="#ce9178"/><rect x="34" y="485" width="6" height="2" fill="#ce9178"/><rect x="41" y="485" width="1" height="2" fill="#d4d4d4"/><rect x="20" y="487" width="5" height="2" fill="#9cdcfe"/><rect x="26" y="487" width="1" height="2" fill="#d4d4d4"/><rect x="27" y="487" width="5" height="2" fill="#b5cea8"/><rect x="20" y="489" width="2" height="2" fill="#9cdcfe"/><rect x="23" y="489" width="1" height="2" fill="#d4d4d4"/><rect x="26" y="489" width="5" height="2" fill="#dcdcaa"/><rect x="32" y="489" width="9" height="2" fill="#b5cea8"/><rect x="42" y="489" width="3" height="2" fill="#b5cea8"/><rect x="20" y="491" width="2" height="2" fill="#9cdcfe"/><rect x="23" y="491" width="1" height="2" fill="#d4d4d4"/><rect x="26" y="491" width="5" height="2" fill="#dcdcaa"/><rect x="32" y="491" width="3" height="2" fill="#b5cea8"/><rect x="36" y="491" width="5" height="2" fill="#b5cea8"/><rect x="42" y="491" width="3" height="2" fill="#b5cea8"/><rect x="16" y="493" width="1" height="2" fill="#c8c8b0" opacity="0.6"/><rect x="12" y="495" width="1" height="2" fill="#c8c8b0" opacity="0.6"/><rect x="13" y="495" width="1" height="2" fill="#d4d4d4"/><rect x="12" y="497" width="4" height="2" fill="#9cdcfe"/><rect x="18" y="497" width="1" height="2" fill="#d4d4d4"/><rect x="20" y="497" width="1" height="2" fill="#c8c8b0" opacity="0.6"/><rect x="16" y="499" width="6" height="2" fill="#9cdcfe"/><rect x="23" y="499" width="1" height="2" fill="#d4d4d4"/><rect x="24" y="499" width="9" height="2" fill="#ce9178"/><rect x="34" y="499" width="2" height="2" fill="#ce9178"/><rect x="37" y="499" width="1" height="2" fill="#d4d4d4"/><rect x="16" y="501" width="8" height="2" fill="#9cdcfe"/><rect x="25" y="501" width="1" height="2" fill="#d4d4d4"/><rect x="27" y="501" width="5" height="2" fill="#b5cea8"/><rect x="16" y="503" width="4" height="2" fill="#9cdcfe"/><rect x="21" y="503" width="1" height="2" fill="#d4d4d4"/><rect x="23" y="503" width="9" height="2" fill="#ce9178"/><rect x="33" y="503" width="7" height="2" fill="#ce9178"/><rect x="41" y="503" width="8" height="2" fill="#ce9178"/><rect x="50" y="503" width="5" height="2" fill="#ce9178"/><rect x="56" y="503" width="1" height="2" fill="#d4d4d4"/><rect x="16" y="505" width="4" height="2" fill="#9cdcfe"/><rect x="21" y="505" width="1" height="2" fill="#d4d4d4"/><rect x="23" y="505" width="4" height="2" fill="#ce9178"/><rect x="28" y="505" width="3" height="2" fill="#ce9178"/><rect x="32" y="505" width="1" height="2" fill="#d4d4d4"/><rect x="16" y="507" width="4" height="2" fill="#9cdcfe"/><rect x="21" y="507" width="1" height="2" fill="#d4d4d4"/><rect x="24" y="507" width="2" height="2" fill="#b5cea8"/><rect x="16" y="509" width="4" height="2" fill="#9cdcfe"/><rect x="22" y="509" width="1" height="2" fill="#d4d4d4"/><rect x="24" y="509" width="1" height="2" fill="#c8c8b0" opacity="0.6"/><rect x="20" y="511" width="5" height="2" fill="#9cdcfe"/><rect x="26" y="511" width="1" height="2" fill="#d4d4d4"/><rect x="28" y="511" width="4" height="2" fill="#ce9178"/><rect x="33" y="511" width="5" height="2" fill="#ce9178"/><rect x="39" y="511" width="8" height="2" fill="#ce9178"/><rect x="49" y="511" width="1" height="2" fill="#d4d4d4"/><rect x="20" y="513" width="5" height="2" fill="#9cdcfe"/><rect x="26" y="513" width="1" height="2" fill="#d4d4d4"/><rect x="27" y="513" width="5" height="2" fill="#b5cea8"/><rect x="20" y="515" width="2" height="2" fill="#9cdcfe"/><rect x="23" y="515" width="1" height="2" fill="#d4d4d4"/><rect x="26" y="515" width="5" height="2" fill="#dcdcaa"/><rect x="32" y="515" width="6" height="2" fill="#b5cea8"/><rect x="39" y="515" width="3" height="2" fill="#b5cea8"/><rect x="43" y="515" width="3" height="2" fill="#b5cea8"/><rect x="20" y="517" width="2" height="2" fill="#9cdcfe"/><rect x="23" y="517" width="1" height="2" fill="#d4d4d4"/><rect x="26" y="517" width="5" height="2" fill="#dcdcaa"/><rect x="32" y="517" width="7" height="2" fill="#b5cea8"/><rect x="40" y="517" width="4" height="2" fill="#b5cea8"/><rect x="16" y="519" width="1" height="2" fill="#c8c8b0" opacity="0.6"/><rect x="12" y="521" width="1" height="2" fill="#c8c8b0" opacity="0.6"/><rect x="13" y="521" width="1" height="2" fill="#d4d4d4"/><rect x="12" y="523" width="4" height="2" fill="#9cdcfe"/><rect x="18" y="523" width="1" height="2" fill="#d4d4d4"/><rect x="20" y="523" width="1" height="2" fill="#c8c8b0" opacity="0.6"/><rect x="16" y="525" width="6" height="2" fill="#9cdcfe"/><rect x="23" y="525" width="1" height="2" fill="#d4d4d4"/><rect x="24" y="525" width="8" height="2" fill="#ce9178"/><rect x="33" y="525" width="2" height="2" fill="#ce9178"/><rect x="36" y="525" width="1" height="2" fill="#d4d4d4"/><rect x="16" y="527" width="8" height="2" fill="#9cdcfe"/><rect x="25" y="527" width="1" height="2" fill="#d4d4d4"/><rect x="27" y="527" width="5" height="2" fill="#b5cea8"/><rect x="16" y="529" width="4" height="2" fill="#9cdcfe"/><rect x="21" y="529" width="1" height="2" fill="#d4d4d4"/><rect x="23" y="529" width="8" height="2" fill="#ce9178"/><rect x="32" y="529" width="9" height="2" fill="#ce9178"/><rect x="42" y="529" width="5" height="2" fill="#ce9178"/><rect x="48" y="529" width="4" height="2" fill="#ce9178"/><rect x="53" y="529" width="4" height="2" fill="#ce9178"/><rect x="58" y="529" width="3" height="2" fill="#ce9178"/><rect x="62" y="529" width="6" height="2" fill="#ce9178"/><rect x="69" y="529" width="5" height="2" fill="#ce9178"/><rect x="75" y="529" width="6" height="2" fill="#ce9178"/><rect x="83" y="529" width="1" height="2" fill="#d4d4d4"/><rect x="16" y="531" width="4" height="2" fill="#9cdcfe"/><rect x="21" y="531" width="1" height="2" fill="#d4d4d4"/><rect x="23" y="531" width="6" height="2" fill="#ce9178"/><rect x="30" y="531" width="1" height="2" fill="#ce9178"/><rect x="32" y="531" width="1" height="2" fill="#d4d4d4"/><rect x="16" y="533" width="4" height="2" fill="#9cdcfe"/><rect x="21" y="533" width="1" height="2" fill="#d4d4d4"/><rect x="24" y="533" width="2" height="2" fill="#b5cea8"/><rect x="16" y="535" width="4" height="2" fill="#9cdcfe"/><rect x="22" y="535" width="1" height="2" fill="#d4d4d4"/><rect x="24" y="535" width="1" height="2" fill="#c8c8b0" opacity="0.6"/><rect x="20" y="537" width="5" height="2" fill="#9cdcfe"/><rect x="26" y="537" width="1" height="2" fill="#d4d4d4"/><rect x="28" y="537" width="7" height="2" fill="#ce9178"/><rect x="36" y="537" width="7" height="2" fill="#ce9178"/><rect x="44" y="537" width="5" height="2" fill="#ce9178"/><rect x="50" y="537" width="1" height="2" fill="#d4d4d4"/><rect x="20" y="539" width="5" height="2" fill="#9cdcfe"/><rect x="26" y="539" width="1" height="2" fill="#d4d4d4"/><rect x="27" y="539" width="5" height="2" fill="#b5cea8"/><rect x="20" y="541" width="2" height="2" fill="#9cdcfe"/><rect x="23" y="541" width="1" height="2" fill="#d4d4d4"/><rect x="26" y="541" width="5" height="2" fill="#dcdcaa"/><rect x="32" y="541" width="8" height="2" fill="#b5cea8"/><rect x="41" y="541" width="4" height="2" fill="#b5cea8"/><rect x="20" y="543" width="2" height="2" fill="#9cdcfe"/><rect x="23" y="543" width="1" height="2" fill="#d4d4d4"/><rect x="26" y="543" width="5" height="2" fill="#dcdcaa"/><rect x="32" y="543" width="7" height="2" fill="#b5cea8"/><rect x="40" y="543" width="9" height="2" fill="#b5cea8"/><rect x="16" y="545" width="1" height="2" fill="#c8c8b0" opacity="0.6"/><rect x="12" y="547" width="1" height="2" fill="#c8c8b0" opacity="0.6"/><rect x="8" y="549" width="1" height="2" fill="#c8c8b0" opacity="0.6"/><rect x="8" y="553" width="8" height="2" fill="#6a9955"/><rect x="17" y="553" width="4" height="2" fill="#6a9955"/><rect x="22" y="553" width="5" height="2" fill="#6a9955"/><rect x="28" y="553" width="3" height="2" fill="#6a9955"/><rect x="32" y="553" width="8" height="2" fill="#6a9955"/><rect x="41" y="553" width="3" height="2" fill="#6a9955"/><rect x="45" y="553" width="1" height="2" fill="#6a9955"/><rect x="8" y="557" width="4" height="2" fill="#6a9955"/><rect x="13" y="557" width="7" height="2" fill="#6a9955"/><rect x="21" y="557" width="3" height="2" fill="#6a9955"/><rect x="25" y="557" width="6" height="2" fill="#6a9955"/><rect x="32" y="557" width="8" height="2" fill="#6a9955"/><rect x="41" y="557" width="8" height="2" fill="#6a9955"/><rect x="50" y="557" width="4" height="2" fill="#6a9955"/><rect x="55" y="557" width="4" height="2" fill="#6a9955"/><rect x="60" y="557" width="1" height="2" fill="#6a9955"/><rect x="8" y="559" width="6" height="2" fill="#6a9955"/><rect x="15" y="559" width="5" height="2" fill="#6a9955"/><rect x="21" y="559" width="7" height="2" fill="#6a9955"/><rect x="29" y="559" width="5" height="2" fill="#6a9955"/><rect x="35" y="559" width="6" height="2" fill="#6a9955"/><rect x="42" y="559" width="7" height="2" fill="#6a9955"/><rect x="50" y="559" width="8" height="2" fill="#6a9955"/><rect x="59" y="559" width="3" height="2" fill="#6a9955"/><rect x="63" y="559" width="3" height="2" fill="#6a9955"/><rect x="8" y="561" width="8" height="2" fill="#6a9955"/><rect x="17" y="561" width="7" height="2" fill="#6a9955"/><rect x="25" y="561" width="7" height="2" fill="#6a9955"/><rect x="33" y="561" width="5" height="2" fill="#6a9955"/><rect x="39" y="561" width="5" height="2" fill="#6a9955"/><rect x="45" y="561" width="8" height="2" fill="#6a9955"/><rect x="54" y="561" width="1" height="2" fill="#6a9955"/><rect x="8" y="563" width="8" height="2" fill="#6a9955"/><rect x="17" y="563" width="8" height="2" fill="#6a9955"/><rect x="26" y="563" width="9" height="2" fill="#6a9955"/><rect x="36" y="563" width="8" height="2" fill="#6a9955"/><rect x="8" y="567" width="7" height="2" fill="#6a9955"/><rect x="16" y="567" width="6" height="2" fill="#6a9955"/><rect x="23" y="567" width="7" height="2" fill="#6a9955"/><rect x="31" y="567" width="3" height="2" fill="#6a9955"/><rect x="35" y="567" width="2" height="2" fill="#6a9955"/><rect x="8" y="569" width="6" height="2" fill="#9cdcfe"/><rect x="14" y="569" width="1" height="2" fill="#d4d4d4"/><rect x="15" y="569" width="11" height="2" fill="#4ec9b0"/><rect x="27" y="569" width="1" height="2" fill="#d4d4d4"/><rect x="29" y="569" width="1" height="2" fill="#c8c8b0" opacity="0.6"/><rect x="12" y="571" width="8" height="2" fill="#9cdcfe"/><rect x="21" y="571" width="1" height="2" fill="#d4d4d4"/><rect x="23" y="571" width="1" height="2" fill="#c8c8b0" opacity="0.6"/><rect x="16" y="573" width="6" height="2" fill="#9cdcfe"/><rect x="23" y="573" width="1" height="2" fill="#d4d4d4"/><rect x="25" y="573" width="6" height="2" fill="#9cdcfe"/><rect x="32" y="573" width="17" height="2" fill="#4ec9b0"/><rect x="50" y="573" width="1" height="2" fill="#d4d4d4"/><rect x="16" y="575" width="7" height="2" fill="#9cdcfe"/><rect x="24" y="575" width="1" height="2" fill="#d4d4d4"/><rect x="26" y="575" width="1" height="2" fill="#c8c8b0" opacity="0.6"/><rect x="20" y="577" width="1" height="2" fill="#c8c8b0" opacity="0.6"/><rect x="24" y="579" width="4" height="2" fill="#9cdcfe"/><rect x="29" y="579" width="1" height="2" fill="#d4d4d4"/><rect x="31" y="579" width="9" height="2" fill="#ce9178"/><rect x="41" y="579" width="4" height="2" fill="#ce9178"/><rect x="46" y="579" width="4" height="2" fill="#ce9178"/><rect x="51" y="579" width="1" height="2" fill="#d4d4d4"/><rect x="24" y="581" width="4" height="2" fill="#9cdcfe"/><rect x="29" y="581" width="1" height="2" fill="#d4d4d4"/><rect x="31" y="581" width="5" height="2" fill="#ce9178"/><rect x="37" y="581" width="7" height="2" fill="#ce9178"/><rect x="45" y="581" width="2" height="2" fill="#ce9178"/><rect x="48" y="581" width="1" height="2" fill="#d4d4d4"/><rect x="24" y="583" width="5" height="2" fill="#9cdcfe"/><rect x="30" y="583" width="1" height="2" fill="#d4d4d4"/><rect x="31" y="583" width="9" height="2" fill="#ce9178"/><rect x="41" y="583" width="4" height="2" fill="#ce9178"/><rect x="46" y="583" width="1" height="2" fill="#d4d4d4"/><rect x="24" y="585" width="4" height="2" fill="#9cdcfe"/><rect x="29" y="585" width="1" height="2" fill="#d4d4d4"/><rect x="31" y="585" width="3" height="2" fill="#ce9178"/><rect x="35" y="585" width="4" height="2" fill="#ce9178"/><rect x="40" y="585" width="1" height="2" fill="#d4d4d4"/><rect x="24" y="587" width="5" height="2" fill="#9cdcfe"/><rect x="30" y="587" width="1" height="2" fill="#d4d4d4"/><rect x="32" y="587" width="1" height="2" fill="#c8c8b0" opacity="0.6"/><rect x="28" y="589" width="4" height="2" fill="#9cdcfe"/><rect x="33" y="589" width="1" height="2" fill="#d4d4d4"/><rect x="35" y="589" width="5" height="2" fill="#ce9178"/><rect x="41" y="589" width="1" height="2" fill="#d4d4d4"/><rect x="28" y="591" width="4" height="2" fill="#9cdcfe"/><rect x="33" y="591" width="1" height="2" fill="#d4d4d4"/><rect x="35" y="591" width="6" height="2" fill="#ce9178"/><rect x="42" y="591" width="3" height="2" fill="#ce9178"/><rect x="24" y="593" width="1" height="2" fill="#c8c8b0" opacity="0.6"/><rect x="20" y="595" width="1" height="2" fill="#c8c8b0" opacity="0.6"/><rect x="16" y="597" width="1" height="2" fill="#c8c8b0" opacity="0.6"/><rect x="12" y="599" width="1" height="2" fill="#c8c8b0" opacity="0.6"/><rect x="13" y="599" width="1" height="2" fill="#d4d4d4"/><rect x="12" y="601" width="7" height="2" fill="#9cdcfe"/><rect x="20" y="601" width="3" height="2" fill="#9cdcfe"/><rect x="24" y="601" width="1" height="2" fill="#d4d4d4"/><rect x="26" y="601" width="1" height="2" fill="#c8c8b0" opacity="0.6"/><rect x="16" y="603" width="6" height="2" fill="#9cdcfe"/><rect x="23" y="603" width="1" height="2" fill="#d4d4d4"/><rect x="25" y="603" width="6" height="2" fill="#9cdcfe"/><rect x="32" y="603" width="21" height="2" fill="#4ec9b0"/><rect x="54" y="603" width="1" height="2" fill="#d4d4d4"/><rect x="16" y="605" width="6" height="2" fill="#9cdcfe"/><rect x="23" y="605" width="1" height="2" fill="#d4d4d4"/><rect x="25" y="605" width="6" height="2" fill="#9cdcfe"/><rect x="32" y="605" width="22" height="2" fill="#4ec9b0"/><rect x="55" y="605" width="1" height="2" fill="#d4d4d4"/><rect x="16" y="607" width="7" height="2" fill="#9cdcfe"/><rect x="24" y="607" width="1" height="2" fill="#d4d4d4"/><rect x="26" y="607" width="1" height="2" fill="#c8c8b0" opacity="0.6"/><rect x="20" y="609" width="1" height="2" fill="#c8c8b0" opacity="0.6"/><rect x="24" y="611" width="4" height="2" fill="#9cdcfe"/><rect x="29" y="611" width="1" height="2" fill="#d4d4d4"/><rect x="31" y="611" width="8" height="2" fill="#ce9178"/><rect x="40" y="611" width="3" height="2" fill="#ce9178"/><rect x="44" y="611" width="6" height="2" fill="#ce9178"/><rect x="51" y="611" width="3" height="2" fill="#ce9178"/><rect x="55" y="611" width="1" height="2" fill="#d4d4d4"/><rect x="24" y="613" width="4" height="2" fill="#9cdcfe"/><rect x="29" y="613" width="1" height="2" fill="#d4d4d4"/><rect x="31" y="613" width="9" height="2" fill="#ce9178"/><rect x="41" y="613" width="7" height="2" fill="#ce9178"/><rect x="49" y="613" width="4" height="2" fill="#ce9178"/><rect x="54" y="613" width="1" height="2" fill="#d4d4d4"/><rect x="24" y="615" width="5" height="2" fill="#9cdcfe"/><rect x="30" y="615" width="1" height="2" fill="#d4d4d4"/><rect x="31" y="615" width="3" height="2" fill="#ce9178"/><rect x="35" y="615" width="3" height="2" fill="#ce9178"/><rect x="39" y="615" width="4" height="2" fill="#ce9178"/><rect x="44" y="615" width="1" height="2" fill="#ce9178"/><rect x="46" y="615" width="1" height="2" fill="#d4d4d4"/><rect x="24" y="617" width="5" height="2" fill="#9cdcfe"/><rect x="30" y="617" width="1" height="2" fill="#d4d4d4"/><rect x="32" y="617" width="1" height="2" fill="#c8c8b0" opacity="0.6"/><rect x="33" y="617" width="10" height="2" fill="#d4d4d4" opacity="0.45"/><rect x="44" y="617" width="2" height="2" fill="#b5cea8"/><rect x="47" y="617" width="1" height="2" fill="#d4d4d4"/><rect x="24" y="619" width="5" height="2" fill="#9cdcfe"/><rect x="30" y="619" width="1" height="2" fill="#d4d4d4"/><rect x="31" y="619" width="7" height="2" fill="#ce9178"/><rect x="40" y="619" width="1" height="2" fill="#d4d4d4"/><rect x="24" y="621" width="5" height="2" fill="#9cdcfe"/><rect x="30" y="621" width="1" height="2" fill="#d4d4d4"/><rect x="32" y="621" width="1" height="2" fill="#c8c8b0" opacity="0.6"/><rect x="28" y="623" width="4" height="2" fill="#9cdcfe"/><rect x="33" y="623" width="1" height="2" fill="#d4d4d4"/><rect x="35" y="623" width="1" height="2" fill="#ce9178"/><rect x="37" y="623" width="1" height="2" fill="#d4d4d4"/><rect x="28" y="625" width="4" height="2" fill="#9cdcfe"/><rect x="33" y="625" width="1" height="2" fill="#d4d4d4"/><rect x="35" y="625" width="5" height="2" fill="#ce9178"/><rect x="41" y="625" width="7" height="2" fill="#ce9178"/><rect x="24" y="627" width="1" height="2" fill="#c8c8b0" opacity="0.6"/><rect x="20" y="629" width="1" height="2" fill="#c8c8b0" opacity="0.6"/><rect x="16" y="631" width="1" height="2" fill="#c8c8b0" opacity="0.6"/><rect x="12" y="633" width="1" height="2" fill="#c8c8b0" opacity="0.6"/><rect x="13" y="633" width="1" height="2" fill="#d4d4d4"/><rect x="12" y="635" width="5" height="2" fill="#9cdcfe"/><rect x="18" y="635" width="5" height="2" fill="#9cdcfe"/><rect x="24" y="635" width="1" height="2" fill="#d4d4d4"/><rect x="26" y="635" width="1" height="2" fill="#c8c8b0" opacity="0.6"/><rect x="16" y="637" width="6" height="2" fill="#9cdcfe"/><rect x="23" y="637" width="1" height="2" fill="#d4d4d4"/><rect x="25" y="637" width="6" height="2" fill="#9cdcfe"/><rect x="32" y="637" width="20" height="2" fill="#4ec9b0"/><rect x="53" y="637" width="1" height="2" fill="#d4d4d4"/><rect x="16" y="639" width="7" height="2" fill="#9cdcfe"/><rect x="24" y="639" width="1" height="2" fill="#d4d4d4"/><rect x="26" y="639" width="1" height="2" fill="#c8c8b0" opacity="0.6"/><rect x="20" y="641" width="1" height="2" fill="#c8c8b0" opacity="0.6"/><rect x="24" y="643" width="4" height="2" fill="#9cdcfe"/><rect x="29" y="643" width="1" height="2" fill="#d4d4d4"/><rect x="31" y="643" width="8" height="2" fill="#ce9178"/><rect x="40" y="643" width="4" height="2" fill="#ce9178"/><rect x="45" y="643" width="7" height="2" fill="#ce9178"/><rect x="53" y="643" width="1" height="2" fill="#ce9178"/><rect x="55" y="643" width="1" height="2" fill="#d4d4d4"/><rect x="24" y="645" width="4" height="2" fill="#9cdcfe"/><rect x="29" y="645" width="1" height="2" fill="#d4d4d4"/><rect x="31" y="645" width="7" height="2" fill="#ce9178"/><rect x="39" y="645" width="3" height="2" fill="#ce9178"/><rect x="43" y="645" width="3" height="2" fill="#ce9178"/><rect x="47" y="645" width="4" height="2" fill="#ce9178"/><rect x="52" y="645" width="1" height="2" fill="#ce9178"/><rect x="54" y="645" width="1" height="2" fill="#d4d4d4"/><rect x="24" y="647" width="5" height="2" fill="#9cdcfe"/><rect x="30" y="647" width="1" height="2" fill="#d4d4d4"/><rect x="31" y="647" width="9" height="2" fill="#ce9178"/><rect x="41" y="647" width="4" height="2" fill="#ce9178"/><rect x="46" y="647" width="1" height="2" fill="#d4d4d4"/><rect x="24" y="649" width="5" height="2" fill="#9cdcfe"/><rect x="30" y="649" width="1" height="2" fill="#d4d4d4"/><rect x="32" y="649" width="1" height="2" fill="#c8c8b0" opacity="0.6"/><rect x="33" y="649" width="10" height="2" fill="#d4d4d4" opacity="0.45"/><rect x="44" y="649" width="2" height="2" fill="#b5cea8"/><rect x="47" y="649" width="1" height="2" fill="#d4d4d4"/><rect x="24" y="651" width="5" height="2" fill="#9cdcfe"/><rect x="30" y="651" width="1" height="2" fill="#d4d4d4"/><rect x="31" y="651" width="8" height="2" fill="#ce9178"/><rect x="40" y="651" width="1" height="2" fill="#d4d4d4"/><rect x="24" y="653" width="5" height="2" fill="#9cdcfe"/><rect x="30" y="653" width="1" height="2" fill="#d4d4d4"/><rect x="32" y="653" width="1" height="2" fill="#c8c8b0" opacity="0.6"/><rect x="28" y="655" width="4" height="2" fill="#9cdcfe"/><rect x="33" y="655" width="1" height="2" fill="#d4d4d4"/><rect x="35" y="655" width="1" height="2" fill="#ce9178"/><rect x="37" y="655" width="1" height="2" fill="#d4d4d4"/><rect x="28" y="657" width="4" height="2" fill="#9cdcfe"/><rect x="33" y="657" width="1" height="2" fill="#d4d4d4"/><rect x="35" y="657" width="7" height="2" fill="#ce9178"/><rect x="43" y="657" width="5" height="2" fill="#ce9178"/><rect x="24" y="659" width="1" height="2" fill="#c8c8b0" opacity="0.6"/><rect x="20" y="661" width="1" height="2" fill="#c8c8b0" opacity="0.6"/><rect x="16" y="663" width="1" height="2" fill="#c8c8b0" opacity="0.6"/><rect x="12" y="665" width="1" height="2" fill="#c8c8b0" opacity="0.6"/><rect x="13" y="665" width="1" height="2" fill="#d4d4d4"/><rect x="12" y="667" width="8" height="2" fill="#9cdcfe"/><rect x="21" y="667" width="1" height="2" fill="#d4d4d4"/><rect x="23" y="667" width="1" height="2" fill="#c8c8b0" opacity="0.6"/><rect x="16" y="669" width="6" height="2" fill="#9cdcfe"/><rect x="23" y="669" width="1" height="2" fill="#d4d4d4"/><rect x="25" y="669" width="6" height="2" fill="#9cdcfe"/><rect x="32" y="669" width="17" height="2" fill="#4ec9b0"/><rect x="50" y="669" width="1" height="2" fill="#d4d4d4"/><rect x="16" y="671" width="7" height="2" fill="#9cdcfe"/><rect x="24" y="671" width="1" height="2" fill="#d4d4d4"/><rect x="26" y="671" width="1" height="2" fill="#c8c8b0" opacity="0.6"/><rect x="20" y="673" width="1" height="2" fill="#c8c8b0" opacity="0.6"/><rect x="24" y="675" width="4" height="2" fill="#9cdcfe"/><rect x="29" y="675" width="1" height="2" fill="#d4d4d4"/><rect x="31" y="675" width="9" height="2" fill="#ce9178"/><rect x="41" y="675" width="4" height="2" fill="#ce9178"/><rect x="46" y="675" width="1" height="2" fill="#d4d4d4"/><rect x="24" y="677" width="4" height="2" fill="#9cdcfe"/><rect x="29" y="677" width="1" height="2" fill="#d4d4d4"/><rect x="31" y="677" width="4" height="2" fill="#ce9178"/><rect x="36" y="677" width="5" height="2" fill="#ce9178"/><rect x="42" y="677" width="3" height="2" fill="#ce9178"/><rect x="46" y="677" width="1" height="2" fill="#d4d4d4"/><rect x="24" y="679" width="5" height="2" fill="#9cdcfe"/><rect x="30" y="679" width="1" height="2" fill="#d4d4d4"/><rect x="31" y="679" width="9" height="2" fill="#ce9178"/><rect x="41" y="679" width="7" height="2" fill="#ce9178"/><rect x="49" y="679" width="1" height="2" fill="#d4d4d4"/><rect x="24" y="681" width="5" height="2" fill="#9cdcfe"/><rect x="30" y="681" width="1" height="2" fill="#d4d4d4"/><rect x="32" y="681" width="1" height="2" fill="#c8c8b0" opacity="0.6"/><rect x="33" y="681" width="10" height="2" fill="#d4d4d4" opacity="0.45"/><rect x="44" y="681" width="2" height="2" fill="#b5cea8"/><rect x="47" y="681" width="1" height="2" fill="#d4d4d4"/><rect x="24" y="683" width="5" height="2" fill="#9cdcfe"/><rect x="30" y="683" width="1" height="2" fill="#d4d4d4"/><rect x="31" y="683" width="3" height="2" fill="#ce9178"/><rect x="35" y="683" width="8" height="2" fill="#ce9178"/><rect x="44" y="683" width="9" height="2" fill="#ce9178"/><rect x="54" y="683" width="4" height="2" fill="#ce9178"/><rect x="20" y="685" width="1" height="2" fill="#c8c8b0" opacity="0.6"/><rect x="16" y="687" width="1" height="2" fill="#c8c8b0" opacity="0.6"/><rect x="12" y="689" width="1" height="2" fill="#c8c8b0" opacity="0.6"/><rect x="13" y="689" width="1" height="2" fill="#d4d4d4"/><rect x="12" y="691" width="6" height="2" fill="#9cdcfe"/><rect x="19" y="691" width="4" height="2" fill="#9cdcfe"/><rect x="24" y="691" width="1" height="2" fill="#9cdcfe"/><rect x="27" y="691" width="1" height="2" fill="#d4d4d4"/><rect x="29" y="691" width="1" height="2" fill="#c8c8b0" opacity="0.6"/><rect x="16" y="693" width="6" height="2" fill="#9cdcfe"/><rect x="23" y="693" width="1" height="2" fill="#d4d4d4"/><rect x="25" y="693" width="6" height="2" fill="#9cdcfe"/><rect x="32" y="693" width="22" height="2" fill="#4ec9b0"/><rect x="55" y="693" width="1" height="2" fill="#d4d4d4"/><rect x="16" y="695" width="6" height="2" fill="#9cdcfe"/><rect x="23" y="695" width="1" height="2" fill="#d4d4d4"/><rect x="25" y="695" width="8" height="2" fill="#c586c0"/><rect x="33" y="695" width="1" height="2" fill="#c8c8b0" opacity="0.6"/><rect x="20" y="697" width="5" height="2" fill="#569cd6"/><rect x="26" y="697" width="6" height="2" fill="#9cdcfe"/><rect x="34" y="697" width="1" height="2" fill="#d4d4d4"/><rect x="36" y="697" width="1" height="2" fill="#c8c8b0" opacity="0.6"/><rect x="20" y="699" width="2" height="2" fill="#c586c0"/><rect x="24" y="699" width="5" height="2" fill="#9cdcfe"/><rect x="32" y="699" width="1" height="2" fill="#c586c0"/><rect x="35" y="699" width="4" height="2" fill="#dcdcaa"/><rect x="40" y="699" width="1" height="2" fill="#c8c8b0" opacity="0.6"/><rect x="41" y="699" width="5" height="2" fill="#9cdcfe"/><rect x="47" y="699" width="17" height="2" fill="#4ec9b0"/><rect x="65" y="699" width="1" height="2" fill="#c8c8b0" opacity="0.6"/><rect x="67" y="699" width="1" height="2" fill="#c586c0"/><rect x="24" y="701" width="12" height="2" fill="#dcdcaa"/><rect x="36" y="701" width="1" height="2" fill="#c8c8b0" opacity="0.6"/><rect x="37" y="701" width="6" height="2" fill="#9cdcfe"/><rect x="44" y="701" width="1" height="2" fill="#d4d4d4"/><rect x="46" y="701" width="1" height="2" fill="#c8c8b0" opacity="0.6"/><rect x="28" y="703" width="4" height="2" fill="#9cdcfe"/><rect x="33" y="703" width="1" height="2" fill="#d4d4d4"/><rect x="35" y="703" width="4" height="2" fill="#9cdcfe"/><rect x="40" y="703" width="9" height="2" fill="#4ec9b0"/><rect x="50" y="703" width="1" height="2" fill="#d4d4d4"/><rect x="28" y="705" width="4" height="2" fill="#9cdcfe"/><rect x="33" y="705" width="1" height="2" fill="#d4d4d4"/><rect x="35" y="705" width="4" height="2" fill="#9cdcfe"/><rect x="40" y="705" width="6" height="2" fill="#4ec9b0"/><rect x="47" y="705" width="1" height="2" fill="#d4d4d4"/><rect x="28" y="707" width="4" height="2" fill="#9cdcfe"/><rect x="33" y="707" width="1" height="2" fill="#d4d4d4"/><rect x="35" y="707" width="4" height="2" fill="#ce9178"/><rect x="40" y="707" width="4" height="2" fill="#ce9178"/><rect x="45" y="707" width="5" height="2" fill="#ce9178"/><rect x="51" y="707" width="2" height="2" fill="#ce9178"/><rect x="54" y="707" width="1" height="2" fill="#d4d4d4"/><rect x="28" y="709" width="6" height="2" fill="#9cdcfe"/><rect x="35" y="709" width="1" height="2" fill="#d4d4d4"/><rect x="37" y="709" width="2" height="2" fill="#ce9178"/><rect x="40" y="709" width="5" height="2" fill="#d4d4d4" opacity="0.45"/><rect x="47" y="709" width="6" height="2" fill="#9cdcfe"/><rect x="54" y="709" width="8" height="2" fill="#4ec9b0"/><rect x="64" y="709" width="9" height="2" fill="#dcdcaa"/><rect x="74" y="709" width="1" height="2" fill="#ce9178"/><rect x="76" y="709" width="4" height="2" fill="#d4d4d4" opacity="0.45"/><rect x="81" y="709" width="7" height="2" fill="#ce9178"/><rect x="92" y="709" width="11" height="2" fill="#dcdcaa"/><rect x="104" y="709" width="8" height="2" fill="#d4d4d4" opacity="0.45"/><rect x="113" y="709" width="6" height="2" fill="#ce9178"/><rect x="28" y="711" width="4" height="2" fill="#9cdcfe"/><rect x="33" y="711" width="1" height="2" fill="#d4d4d4"/><rect x="35" y="711" width="1" height="2" fill="#c8c8b0" opacity="0.6"/><rect x="37" y="711" width="5" height="2" fill="#ce9178"/><rect x="43" y="711" width="5" height="2" fill="#d4d4d4" opacity="0.45"/><rect x="28" y="713" width="6" height="2" fill="#9cdcfe"/><rect x="35" y="713" width="1" height="2" fill="#d4d4d4"/><rect x="37" y="713" width="1" height="2" fill="#c8c8b0" opacity="0.6"/><rect x="38" y="713" width="3" height="2" fill="#d4d4d4" opacity="0.45"/><rect x="24" y="715" width="2" height="2" fill="#c8c8b0" opacity="0.6"/><rect x="20" y="717" width="3" height="2" fill="#c586c0"/><rect x="20" y="719" width="6" height="2" fill="#c586c0"/><rect x="27" y="719" width="7" height="2" fill="#9cdcfe"/><rect x="16" y="721" width="3" height="2" fill="#c586c0"/><rect x="19" y="721" width="2" height="2" fill="#d4d4d4"/><rect x="12" y="723" width="1" height="2" fill="#c8c8b0" opacity="0.6"/><rect x="13" y="723" width="1" height="2" fill="#d4d4d4"/><rect x="12" y="725" width="8" height="2" fill="#9cdcfe"/><rect x="21" y="725" width="1" height="2" fill="#d4d4d4"/><rect x="23" y="725" width="1" height="2" fill="#c8c8b0" opacity="0.6"/><rect x="16" y="727" width="6" height="2" fill="#9cdcfe"/><rect x="23" y="727" width="1" height="2" fill="#d4d4d4"/><rect x="25" y="727" width="6" height="2" fill="#9cdcfe"/><rect x="32" y="727" width="18" height="2" fill="#4ec9b0"/><rect x="51" y="727" width="1" height="2" fill="#d4d4d4"/><rect x="16" y="729" width="6" height="2" fill="#9cdcfe"/><rect x="23" y="729" width="1" height="2" fill="#d4d4d4"/><rect x="25" y="729" width="8" height="2" fill="#c586c0"/><rect x="20" y="731" width="5" height="2" fill="#569cd6"/><rect x="27" y="731" width="5" height="2" fill="#9cdcfe"/><rect x="34" y="731" width="1" height="2" fill="#d4d4d4"/><rect x="36" y="731" width="1" height="2" fill="#c8c8b0" opacity="0.6"/><rect x="20" y="733" width="2" height="2" fill="#c586c0"/><rect x="24" y="733" width="5" height="2" fill="#9cdcfe"/><rect x="32" y="733" width="1" height="2" fill="#c586c0"/><rect x="35" y="733" width="4" height="2" fill="#dcdcaa"/><rect x="40" y="733" width="1" height="2" fill="#c8c8b0" opacity="0.6"/><rect x="41" y="733" width="5" height="2" fill="#9cdcfe"/><rect x="47" y="733" width="6" height="2" fill="#4ec9b0"/><rect x="54" y="733" width="1" height="2" fill="#c8c8b0" opacity="0.6"/><rect x="56" y="733" width="1" height="2" fill="#c586c0"/><rect x="24" y="735" width="12" height="2" fill="#dcdcaa"/><rect x="36" y="735" width="1" height="2" fill="#c8c8b0" opacity="0.6"/><rect x="37" y="735" width="6" height="2" fill="#9cdcfe"/><rect x="44" y="735" width="1" height="2" fill="#d4d4d4"/><rect x="46" y="735" width="1" height="2" fill="#c8c8b0" opacity="0.6"/><rect x="28" y="737" width="4" height="2" fill="#9cdcfe"/><rect x="33" y="737" width="1" height="2" fill="#d4d4d4"/><rect x="35" y="737" width="4" height="2" fill="#9cdcfe"/><rect x="40" y="737" width="9" height="2" fill="#4ec9b0"/><rect x="50" y="737" width="1" height="2" fill="#d4d4d4"/><rect x="28" y="739" width="4" height="2" fill="#9cdcfe"/><rect x="33" y="739" width="1" height="2" fill="#d4d4d4"/><rect x="35" y="739" width="4" height="2" fill="#9cdcfe"/><rect x="40" y="739" width="6" height="2" fill="#4ec9b0"/><rect x="47" y="739" width="1" height="2" fill="#d4d4d4"/><rect x="28" y="741" width="4" height="2" fill="#9cdcfe"/><rect x="33" y="741" width="1" height="2" fill="#d4d4d4"/><rect x="35" y="741" width="3" height="2" fill="#ce9178"/><rect x="39" y="741" width="3" height="2" fill="#ce9178"/><rect x="43" y="741" width="8" height="2" fill="#ce9178"/><rect x="53" y="741" width="1" height="2" fill="#d4d4d4"/><rect x="28" y="743" width="6" height="2" fill="#9cdcfe"/><rect x="35" y="743" width="1" height="2" fill="#d4d4d4"/><rect x="38" y="743" width="3" height="2" fill="#9cdcfe"/><rect x="42" y="743" width="13" height="2" fill="#4ec9b0"/><rect x="56" y="743" width="1" height="2" fill="#d4d4d4"/><rect x="28" y="745" width="4" height="2" fill="#9cdcfe"/><rect x="33" y="745" width="1" height="2" fill="#d4d4d4"/><rect x="35" y="745" width="1" height="2" fill="#c8c8b0" opacity="0.6"/><rect x="37" y="745" width="5" height="2" fill="#ce9178"/><rect x="43" y="745" width="5" height="2" fill="#d4d4d4" opacity="0.45"/><rect x="28" y="747" width="6" height="2" fill="#9cdcfe"/><rect x="35" y="747" width="1" height="2" fill="#d4d4d4"/><rect x="37" y="747" width="1" height="2" fill="#c8c8b0" opacity="0.6"/><rect x="38" y="747" width="3" height="2" fill="#d4d4d4" opacity="0.45"/><rect x="24" y="749" width="2" height="2" fill="#c8c8b0" opacity="0.6"/><rect x="20" y="751" width="3" height="2" fill="#c586c0"/><rect x="20" y="753" width="6" height="2" fill="#c586c0"/><rect x="27" y="753" width="7" height="2" fill="#9cdcfe"/><rect x="16" y="755" width="3" height="2" fill="#c586c0"/><rect x="19" y="755" width="2" height="2" fill="#d4d4d4"/><rect x="12" y="757" width="1" height="2" fill="#c8c8b0" opacity="0.6"/><rect x="13" y="757" width="1" height="2" fill="#d4d4d4"/><rect x="12" y="759" width="4" height="2" fill="#9cdcfe"/><rect x="18" y="759" width="1" height="2" fill="#d4d4d4"/><rect x="20" y="759" width="1" height="2" fill="#c8c8b0" opacity="0.6"/><rect x="16" y="761" width="6" height="2" fill="#9cdcfe"/><rect x="23" y="761" width="1" height="2" fill="#d4d4d4"/><rect x="25" y="761" width="6" height="2" fill="#9cdcfe"/><rect x="32" y="761" width="13" height="2" fill="#4ec9b0"/><rect x="46" y="761" width="1" height="2" fill="#d4d4d4"/><rect x="16" y="763" width="6" height="2" fill="#9cdcfe"/><rect x="23" y="763" width="1" height="2" fill="#d4d4d4"/><rect x="25" y="763" width="8" height="2" fill="#c586c0"/><rect x="20" y="765" width="5" height="2" fill="#569cd6"/><rect x="27" y="765" width="5" height="2" fill="#9cdcfe"/><rect x="34" y="765" width="1" height="2" fill="#d4d4d4"/><rect x="36" y="765" width="1" height="2" fill="#c8c8b0" opacity="0.6"/><rect x="20" y="767" width="2" height="2" fill="#c586c0"/><rect x="24" y="767" width="5" height="2" fill="#9cdcfe"/><rect x="32" y="767" width="1" height="2" fill="#c586c0"/><rect x="35" y="767" width="4" height="2" fill="#dcdcaa"/><rect x="40" y="767" width="1" height="2" fill="#c8c8b0" opacity="0.6"/><rect x="41" y="767" width="5" height="2" fill="#9cdcfe"/><rect x="47" y="767" width="11" height="2" fill="#4ec9b0"/><rect x="59" y="767" width="1" height="2" fill="#c8c8b0" opacity="0.6"/><rect x="61" y="767" width="1" height="2" fill="#c586c0"/><rect x="24" y="769" width="12" height="2" fill="#dcdcaa"/><rect x="36" y="769" width="1" height="2" fill="#c8c8b0" opacity="0.6"/><rect x="37" y="769" width="6" height="2" fill="#9cdcfe"/><rect x="44" y="769" width="1" height="2" fill="#d4d4d4"/><rect x="46" y="769" width="1" height="2" fill="#c8c8b0" opacity="0.6"/><rect x="28" y="771" width="4" height="2" fill="#9cdcfe"/><rect x="33" y="771" width="1" height="2" fill="#d4d4d4"/><rect x="35" y="771" width="4" height="2" fill="#9cdcfe"/><rect x="40" y="771" width="9" height="2" fill="#4ec9b0"/><rect x="50" y="771" width="1" height="2" fill="#d4d4d4"/><rect x="28" y="773" width="4" height="2" fill="#9cdcfe"/><rect x="33" y="773" width="1" height="2" fill="#d4d4d4"/><rect x="35" y="773" width="4" height="2" fill="#9cdcfe"/><rect x="40" y="773" width="6" height="2" fill="#4ec9b0"/><rect x="47" y="773" width="1" height="2" fill="#d4d4d4"/><rect x="28" y="775" width="4" height="2" fill="#9cdcfe"/><rect x="33" y="775" width="1" height="2" fill="#d4d4d4"/><rect x="35" y="775" width="4" height="2" fill="#9cdcfe"/><rect x="40" y="775" width="3" height="2" fill="#4ec9b0"/><rect x="44" y="775" width="1" height="2" fill="#d4d4d4"/><rect x="28" y="777" width="6" height="2" fill="#9cdcfe"/><rect x="35" y="777" width="1" height="2" fill="#d4d4d4"/><rect x="36" y="777" width="3" height="2" fill="#9cdcfe"/><rect x="41" y="777" width="14" height="2" fill="#4ec9b0"/><rect x="56" y="777" width="1" height="2" fill="#d4d4d4"/><rect x="28" y="779" width="4" height="2" fill="#9cdcfe"/><rect x="33" y="779" width="1" height="2" fill="#d4d4d4"/><rect x="35" y="779" width="1" height="2" fill="#c8c8b0" opacity="0.6"/><rect x="40" y="779" width="3" height="2" fill="#ce9178"/><rect x="44" y="779" width="3" height="2" fill="#d4d4d4" opacity="0.45"/><rect x="48" y="779" width="2" height="2" fill="#b5cea8"/><rect x="28" y="781" width="7" height="2" fill="#9cdcfe"/><rect x="36" y="781" width="1" height="2" fill="#d4d4d4"/><rect x="37" y="781" width="1" height="2" fill="#c8c8b0" opacity="0.6"/><rect x="38" y="781" width="3" height="2" fill="#d4d4d4" opacity="0.45"/><rect x="24" y="783" width="2" height="2" fill="#c8c8b0" opacity="0.6"/><rect x="20" y="785" width="3" height="2" fill="#c586c0"/><rect x="20" y="787" width="6" height="2" fill="#c586c0"/><rect x="27" y="787" width="7" height="2" fill="#9cdcfe"/><rect x="16" y="789" width="3" height="2" fill="#c586c0"/><rect x="19" y="789" width="2" height="2" fill="#d4d4d4"/><rect x="12" y="791" width="1" height="2" fill="#c8c8b0" opacity="0.6"/><rect x="13" y="791" width="1" height="2" fill="#d4d4d4"/><rect x="12" y="793" width="4" height="2" fill="#9cdcfe"/><rect x="17" y="793" width="5" height="2" fill="#9cdcfe"/><rect x="24" y="793" width="1" height="2" fill="#d4d4d4"/><rect x="26" y="793" width="1" height="2" fill="#c8c8b0" opacity="0.6"/><rect x="16" y="795" width="6" height="2" fill="#9cdcfe"/><rect x="23" y="795" width="1" height="2" fill="#d4d4d4"/><rect x="25" y="795" width="6" height="2" fill="#9cdcfe"/><rect x="32" y="795" width="20" height="2" fill="#4ec9b0"/><rect x="53" y="795" width="1" height="2" fill="#d4d4d4"/><rect x="16" y="797" width="6" height="2" fill="#9cdcfe"/><rect x="23" y="797" width="1" height="2" fill="#d4d4d4"/><rect x="25" y="797" width="12" height="2" fill="#c586c0"/><rect x="20" y="799" width="5" height="2" fill="#569cd6"/><rect x="27" y="799" width="5" height="2" fill="#9cdcfe"/><rect x="34" y="799" width="1" height="2" fill="#d4d4d4"/><rect x="36" y="799" width="1" height="2" fill="#c8c8b0" opacity="0.6"/><rect x="20" y="801" width="2" height="2" fill="#c586c0"/><rect x="24" y="801" width="5" height="2" fill="#9cdcfe"/><rect x="32" y="801" width="1" height="2" fill="#c586c0"/><rect x="35" y="801" width="7" height="2" fill="#dcdcaa"/><rect x="43" y="801" width="1" height="2" fill="#c8c8b0" opacity="0.6"/><rect x="43" y="801" width="5" height="2" fill="#9cdcfe"/><rect x="49" y="801" width="11" height="2" fill="#4ec9b0"/><rect x="61" y="801" width="1" height="2" fill="#c8c8b0" opacity="0.6"/><rect x="62" y="801" width="2" height="2" fill="#c586c0"/><rect x="24" y="803" width="12" height="2" fill="#dcdcaa"/><rect x="36" y="803" width="1" height="2" fill="#c8c8b0" opacity="0.6"/><rect x="37" y="803" width="7" height="2" fill="#9cdcfe"/><rect x="45" y="803" width="1" height="2" fill="#d4d4d4"/><rect x="46" y="803" width="1" height="2" fill="#c8c8b0" opacity="0.6"/><rect x="28" y="805" width="4" height="2" fill="#9cdcfe"/><rect x="33" y="805" width="1" height="2" fill="#d4d4d4"/><rect x="35" y="805" width="4" height="2" fill="#9cdcfe"/><rect x="41" y="805" width="9" height="2" fill="#4ec9b0"/><rect x="51" y="805" width="1" height="2" fill="#d4d4d4"/><rect x="28" y="807" width="4" height="2" fill="#9cdcfe"/><rect x="33" y="807" width="1" height="2" fill="#d4d4d4"/><rect x="35" y="807" width="4" height="2" fill="#9cdcfe"/><rect x="41" y="807" width="5" height="2" fill="#4ec9b0"/><rect x="47" y="807" width="1" height="2" fill="#d4d4d4"/><rect x="28" y="809" width="4" height="2" fill="#9cdcfe"/><rect x="33" y="809" width="1" height="2" fill="#d4d4d4"/><rect x="35" y="809" width="3" height="2" fill="#ce9178"/><rect x="39" y="809" width="5" height="2" fill="#ce9178"/><rect x="45" y="809" width="6" height="2" fill="#ce9178"/><rect x="52" y="809" width="1" height="2" fill="#d4d4d4"/><rect x="28" y="811" width="6" height="2" fill="#9cdcfe"/><rect x="35" y="811" width="1" height="2" fill="#d4d4d4"/><rect x="36" y="811" width="3" height="2" fill="#9cdcfe"/><rect x="41" y="811" width="15" height="2" fill="#4ec9b0"/><rect x="57" y="811" width="1" height="2" fill="#d4d4d4"/><rect x="28" y="813" width="4" height="2" fill="#9cdcfe"/><rect x="33" y="813" width="1" height="2" fill="#d4d4d4"/><rect x="35" y="813" width="1" height="2" fill="#c8c8b0" opacity="0.6"/><rect x="40" y="813" width="3" height="2" fill="#ce9178"/><rect x="44" y="813" width="3" height="2" fill="#d4d4d4" opacity="0.45"/><rect x="48" y="813" width="2" height="2" fill="#b5cea8"/><rect x="28" y="815" width="7" height="2" fill="#9cdcfe"/><rect x="36" y="815" width="1" height="2" fill="#d4d4d4"/><rect x="37" y="815" width="1" height="2" fill="#c8c8b0" opacity="0.6"/><rect x="38" y="815" width="3" height="2" fill="#d4d4d4" opacity="0.45"/><rect x="24" y="817" width="2" height="2" fill="#c8c8b0" opacity="0.6"/><rect x="20" y="819" width="3" height="2" fill="#c586c0"/><rect x="20" y="821" width="6" height="2" fill="#c586c0"/><rect x="27" y="821" width="7" height="2" fill="#9cdcfe"/><rect x="16" y="823" width="3" height="2" fill="#c586c0"/><rect x="19" y="823" width="2" height="2" fill="#d4d4d4"/><rect x="12" y="825" width="1" height="2" fill="#c8c8b0" opacity="0.6"/><rect x="13" y="825" width="1" height="2" fill="#d4d4d4"/><rect x="12" y="827" width="3" height="2" fill="#9cdcfe"/><rect x="16" y="827" width="4" height="2" fill="#9cdcfe"/><rect x="21" y="827" width="2" height="2" fill="#9cdcfe"/><rect x="24" y="827" width="1" height="2" fill="#d4d4d4"/><rect x="26" y="827" width="1" height="2" fill="#c8c8b0" opacity="0.6"/><rect x="16" y="829" width="6" height="2" fill="#9cdcfe"/><rect x="23" y="829" width="1" height="2" fill="#d4d4d4"/><rect x="25" y="829" width="6" height="2" fill="#9cdcfe"/><rect x="32" y="829" width="20" height="2" fill="#4ec9b0"/><rect x="53" y="829" width="1" height="2" fill="#d4d4d4"/><rect x="16" y="831" width="6" height="2" fill="#9cdcfe"/><rect x="23" y="831" width="1" height="2" fill="#d4d4d4"/><rect x="25" y="831" width="1" height="2" fill="#c8c8b0" opacity="0.6"/><rect x="20" y="833" width="1" height="2" fill="#c8c8b0" opacity="0.6"/><rect x="24" y="835" width="4" height="2" fill="#9cdcfe"/><rect x="29" y="835" width="1" height="2" fill="#d4d4d4"/><rect x="31" y="835" width="9" height="2" fill="#ce9178"/><rect x="42" y="835" width="1" height="2" fill="#d4d4d4"/><rect x="24" y="837" width="4" height="2" fill="#9cdcfe"/><rect x="29" y="837" width="1" height="2" fill="#d4d4d4"/><rect x="31" y="837" width="9" height="2" fill="#ce9178"/><rect x="41" y="837" width="3" height="2" fill="#ce9178"/><rect x="45" y="837" width="3" height="2" fill="#ce9178"/><rect x="49" y="837" width="3" height="2" fill="#ce9178"/><rect x="53" y="837" width="1" height="2" fill="#d4d4d4"/><rect x="24" y="839" width="5" height="2" fill="#9cdcfe"/><rect x="30" y="839" width="1" height="2" fill="#d4d4d4"/><rect x="31" y="839" width="5" height="2" fill="#ce9178"/><rect x="37" y="839" width="9" height="2" fill="#ce9178"/><rect x="47" y="839" width="1" height="2" fill="#ce9178"/><rect x="49" y="839" width="1" height="2" fill="#d4d4d4"/><rect x="24" y="841" width="5" height="2" fill="#9cdcfe"/><rect x="30" y="841" width="1" height="2" fill="#d4d4d4"/><rect x="31" y="841" width="8" height="2" fill="#ce9178"/><rect x="40" y="841" width="9" height="2" fill="#ce9178"/><rect x="50" y="841" width="7" height="2" fill="#ce9178"/><rect x="58" y="841" width="1" height="2" fill="#d4d4d4"/><rect x="24" y="843" width="5" height="2" fill="#9cdcfe"/><rect x="30" y="843" width="1" height="2" fill="#d4d4d4"/><rect x="31" y="843" width="5" height="2" fill="#c8c8b0" opacity="0.6"/><rect x="37" y="843" width="3" height="2" fill="#ce9178"/><rect x="41" y="843" width="5" height="2" fill="#d4d4d4" opacity="0.45"/><rect x="20" y="845" width="1" height="2" fill="#c8c8b0" opacity="0.6"/><rect x="16" y="847" width="1" height="2" fill="#c8c8b0" opacity="0.6"/><rect x="12" y="849" width="1" height="2" fill="#c8c8b0" opacity="0.6"/><rect x="8" y="851" width="1" height="2" fill="#c8c8b0" opacity="0.6"/></g><rect x="25" y="335" width="8" height="2" fill="#7a7a7a"/></svg><div class="mmstripe"></div></div>
<svg class="cur" width="12" height="20" viewBox="0 0 12 20">
<path d="M1.5 2.5h4.5v1M5.5 2.5h4M1.5 17.5h8M5.5 3v14" stroke="#000" stroke-width="2.6" fill="none" opacity="0.55"/>
<path d="M2 2.5h3M6 2.5h3M2 17.5h3M6 17.5h3M5.5 2.5v15" stroke="#ececec" stroke-width="1" fill="none" shape-rendering="crispEdges"/>
</svg>
</body></html>
